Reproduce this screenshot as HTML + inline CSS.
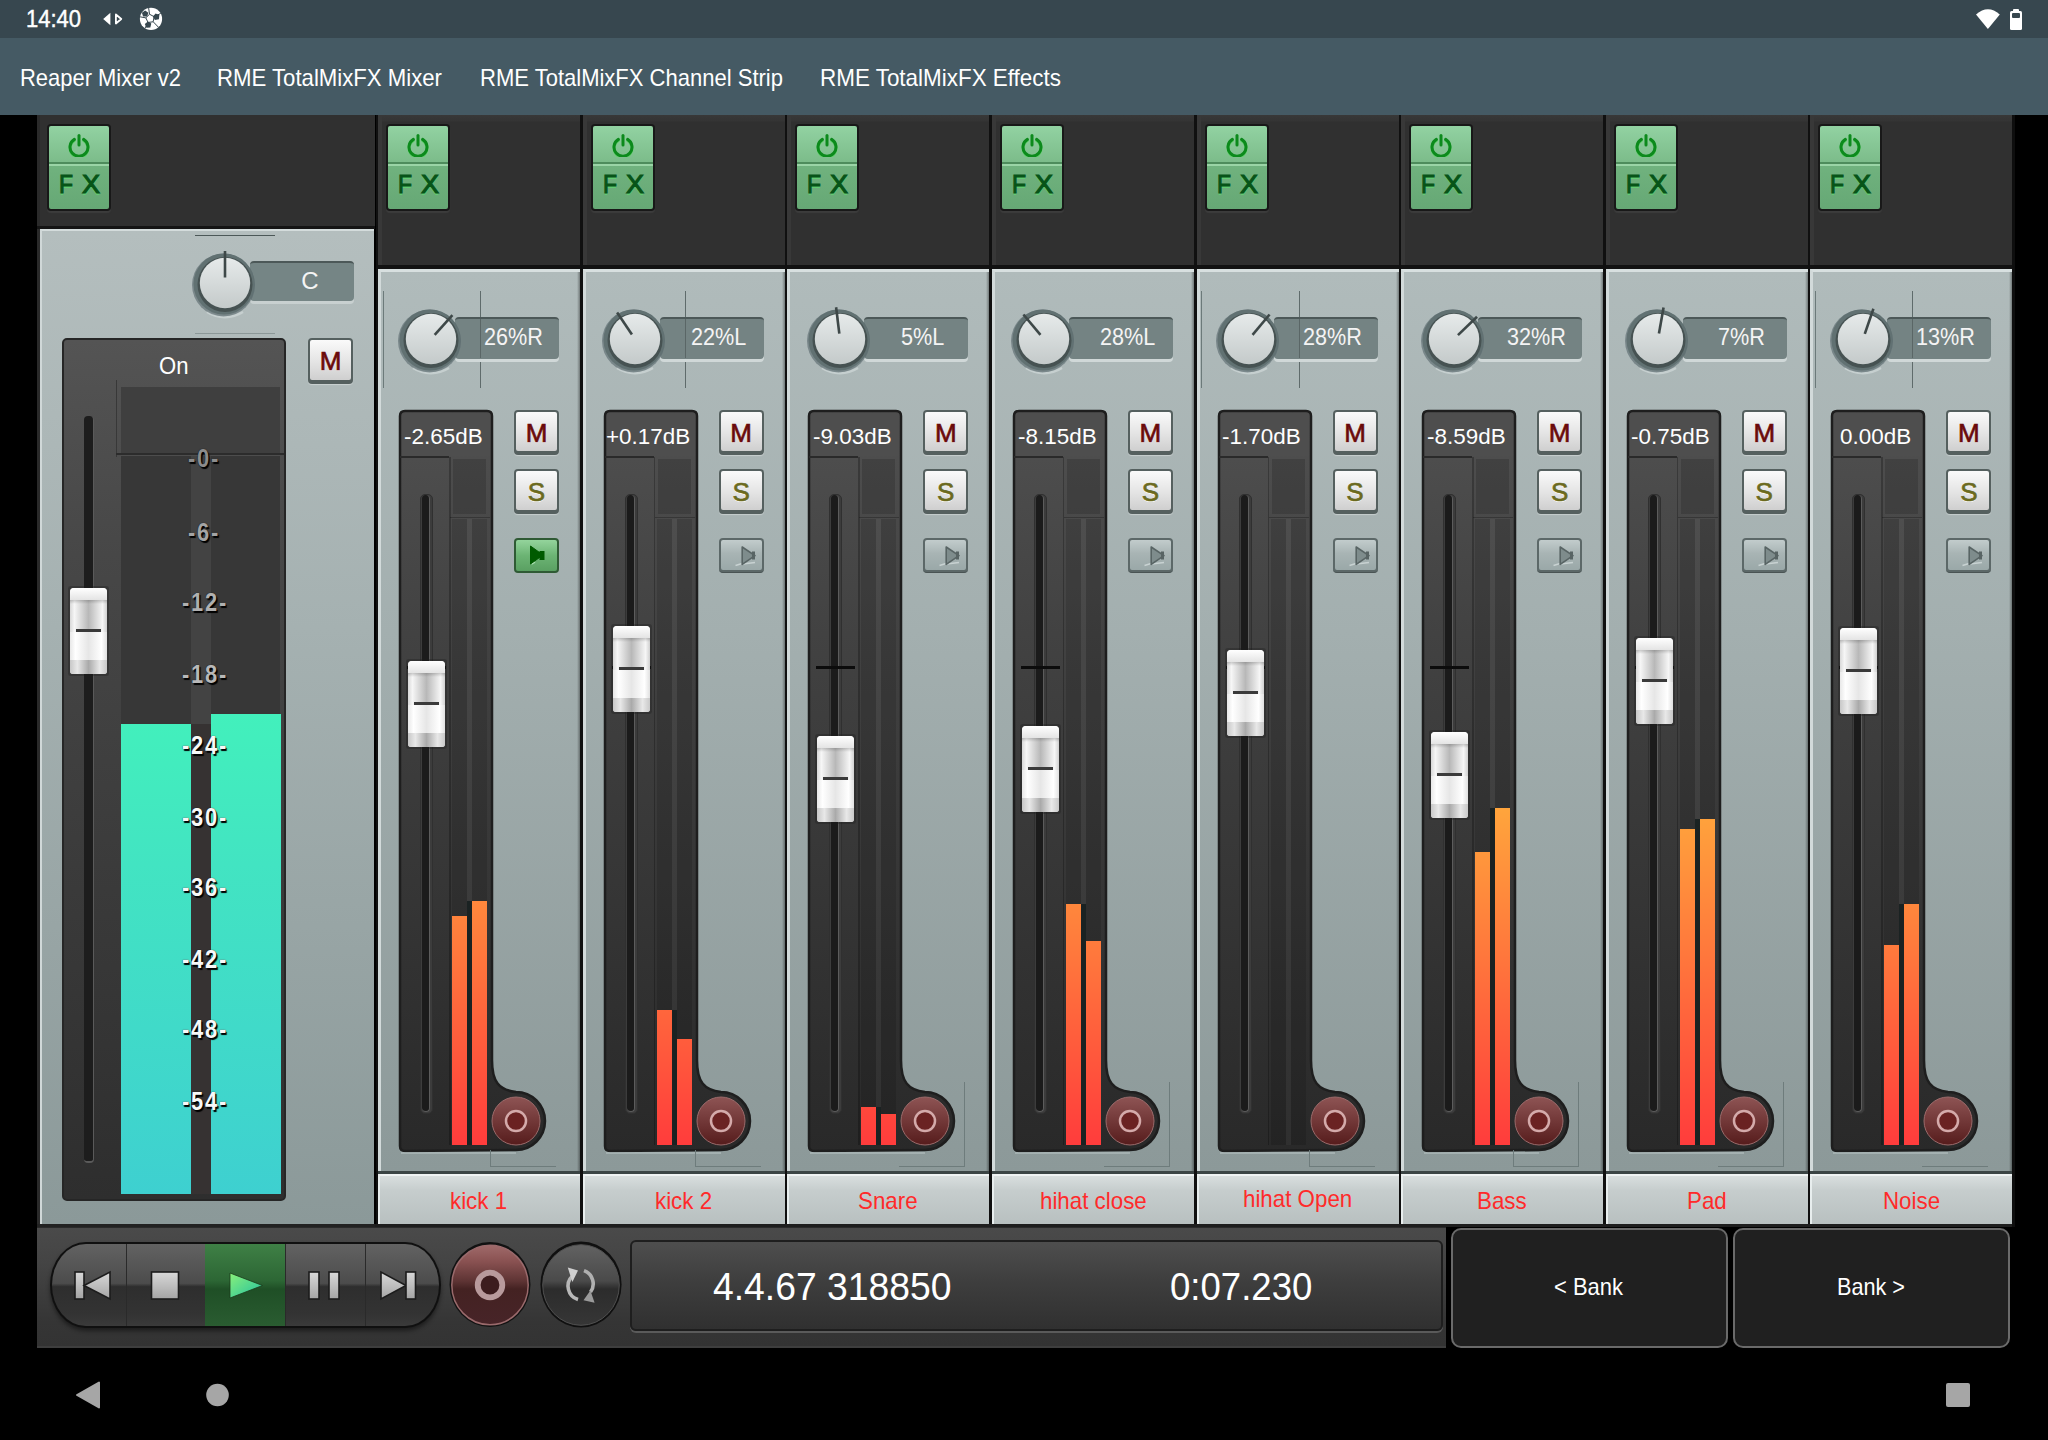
<!DOCTYPE html>
<html><head><meta charset="utf-8"><style>
html,body{margin:0;padding:0;background:#000;width:2048px;height:1440px;overflow:hidden;font-family:"Liberation Sans", sans-serif;}
div{box-sizing:border-box;}
</style></head><body>
<div style="position:relative;width:2048px;height:1440px;overflow:hidden;background:#000">
<div style="position:absolute;left:0px;top:0px;width:2048px;height:38px;background:#37474f"></div><div style="position:absolute;left:26.00px;top:8.45px;font-size:23px;line-height:23px;color:#fff;font-weight:400;white-space:nowrap;transform:scaleX(0.9556);transform-origin:0 0;-webkit-text-stroke:0.4px #fff">14:40</div><svg style="position:absolute;left:100px;top:10px" width="26" height="20" viewBox="100 10 26 20"><path d="M103.2 19 L110.4 12.7 L110.4 25.3 Z" fill="#fff"/><path d="M115.9 14.5 L121.3 19 L115.9 23.5 Z" fill="none" stroke="#fff" stroke-width="1.8" stroke-linejoin="round"/></svg><svg style="position:absolute;left:138px;top:6px" width="26" height="26" viewBox="-13 -12.9 26 26"><defs><clipPath id="bc"><circle r="11.1"/></clipPath></defs><circle r="11.1" fill="#fff"/><g clip-path="url(#bc)"><path d="M-5.87 -8.50 L-2.64 -6.15 L-3.87 -2.35 L-7.87 -2.35 L-9.10 -6.15 Z" fill="#37474f"/><path d="M8.36 -3.85 L7.93 0.24 L3.91 1.10 L1.85 -2.47 L4.60 -5.52 Z" fill="#37474f"/><path d="M-0.68 8.50 L-4.67 8.78 L-6.17 5.08 L-3.11 2.51 L0.28 4.63 Z" fill="#37474f"/><path d="M-5.20 -1.06 L-1.48 -4.66 L3.08 -2.23 L2.19 2.87 L-2.94 3.58 Z M-5.20 -1.06 L-13.08 -2.45 M-1.48 -4.66 L-2.60 -12.58 M3.08 -2.23 L10.28 -5.74 M2.19 2.87 L7.74 8.62 M-2.94 3.58 L-6.69 10.65 " stroke="#37474f" stroke-width="1" fill="none"/></g></svg><svg style="position:absolute;left:1970px;top:4px" width="36" height="30" viewBox="1970 4 36 30"><path d="M1976 14.45 Q1988 4 1999.8 14.45 L1987.9 28.9 Z" fill="#fff"/></svg><div style="position:absolute;left:2010px;top:10.5px;width:12.3px;height:19.4px;background:#fff;border-radius:1.5px"></div><div style="position:absolute;left:2013.3px;top:8.8px;width:5.3px;height:2.5px;background:#fff;border-radius:1px 1px 0 0"></div><div style="position:absolute;left:2012px;top:13.3px;width:8px;height:5.1px;background:#37474f;border-radius:1px"></div><div style="position:absolute;left:0px;top:38px;width:2048px;height:77px;background:#455a64"></div><div style="position:absolute;left:19.50px;top:65.60px;font-size:24px;line-height:24px;color:#fff;font-weight:400;white-space:nowrap;transform:scaleX(0.9144);transform-origin:0 0;">Reaper Mixer v2</div><div style="position:absolute;left:217.00px;top:65.60px;font-size:24px;line-height:24px;color:#fff;font-weight:400;white-space:nowrap;transform:scaleX(0.9237);transform-origin:0 0;">RME TotalMixFX Mixer</div><div style="position:absolute;left:480.00px;top:65.60px;font-size:24px;line-height:24px;color:#fff;font-weight:400;white-space:nowrap;transform:scaleX(0.9172);transform-origin:0 0;">RME TotalMixFX Channel Strip</div><div style="position:absolute;left:820.00px;top:65.60px;font-size:24px;line-height:24px;color:#fff;font-weight:400;white-space:nowrap;transform:scaleX(0.9346);transform-origin:0 0;">RME TotalMixFX Effects</div><div style="position:absolute;left:37px;top:115px;width:338px;height:114px;background:#303030;border-left:3px solid #2a2a2a"></div><div style="position:absolute;left:37px;top:115px;width:3px;height:1112px;background:#2a2a2a"></div><div style="position:absolute;left:37px;top:226px;width:338px;height:3px;background:#141414"></div><div style="position:absolute;left:47px;top:124px;width:64px;height:87px;background:#181818;border-radius:4px;box-shadow:0 2px 1px #3c3c3c"></div><div style="position:absolute;left:49px;top:126px;width:60px;height:36px;background:linear-gradient(#92d2a2,#7cbc8a);border-radius:2px 2px 0 0"></div><div style="position:absolute;left:49px;top:162px;width:60px;height:1.5px;background:#4e8c5c"></div><div style="position:absolute;left:49px;top:163.5px;width:60px;height:2px;background:#9ad4a6"></div><div style="position:absolute;left:49px;top:165.5px;width:60px;height:43px;background:linear-gradient(#70b27e,#66a875);border-radius:0 0 2px 2px"></div><svg style="position:absolute;left:67px;top:133px" width="24" height="24" viewBox="-12 -13 24 24"><path d="M-4.6 -6.6 A9 9 0 1 0 4.6 -6.6" fill="none" stroke="#5fd06a" stroke-width="3" stroke-linecap="round" transform="translate(0,1)"/><path d="M-4.6 -6.6 A9 9 0 1 0 4.6 -6.6" fill="none" stroke="#0c8a1c" stroke-width="3" stroke-linecap="round"/><path d="M0 -10.5 L0 -1" stroke="#0c8a1c" stroke-width="3" stroke-linecap="round"/></svg><div style="position:absolute;left:59.00px;top:170.90px;font-size:26px;line-height:26px;color:#075418;font-weight:400;white-space:nowrap;transform:scaleX(0.8815);transform-origin:0 0;-webkit-text-stroke:1.1px #075418;text-shadow:0 1.5px 0 #62cc72">F</div><div style="position:absolute;left:82.00px;top:170.90px;font-size:26px;line-height:26px;color:#075418;font-weight:400;white-space:nowrap;transform:scaleX(1.0380);transform-origin:0 0;-webkit-text-stroke:1.1px #075418;text-shadow:0 1.5px 0 #62cc72">X</div><div style="position:absolute;left:40px;top:229px;width:334px;height:995px;background:linear-gradient(to bottom,#b4bebe 0%,#a5b1b1 40%,#8b9999 100%);border-top:2px solid #d4dcdc;border-left:2px solid #d0d8d8"></div><div style="position:absolute;left:195px;top:235px;width:80px;height:1px;background:#4c5858"></div><div style="position:absolute;left:195px;top:333px;width:80px;height:1px;background:#8c9898"></div><div style="position:absolute;left:250px;top:261px;width:104px;height:40px;background:#758585;border-top:2px solid #4c5858;border-radius:4px;box-shadow:0 3px 0 #c8d0d0"></div><svg style="position:absolute;left:185px;top:243px;overflow:visible" width="80" height="80" viewBox="-40 -40 80 80"><defs><linearGradient id="kg" x1="0" y1="0" x2="0" y2="1"><stop offset="0" stop-color="#e6eaea"/><stop offset="1" stop-color="#c4caca"/></linearGradient></defs><path d="M-18 29 A34 34 0 0 0 18 29" fill="none" stroke="#d0d8d8" stroke-width="2.5" opacity="0.7"/><circle cx="-1.5" cy="2" r="31.5" fill="#56666a" opacity="0.6"/><circle cx="-1" cy="1" r="30.5" fill="#617172"/><circle cx="0" cy="1.5" r="27.5" fill="#465252"/><circle cx="0" cy="0" r="25.2" fill="url(#kg)"/><line x1="0.00" y1="-5.50" x2="0.00" y2="-32.00" stroke="#3e4848" stroke-width="2.6"/></svg><div style="position:absolute;left:301.33px;top:268.60px;font-size:24px;line-height:24px;color:#f4f4f4;font-weight:400;white-space:nowrap;transform:scaleX(1.0000);transform-origin:0 0;">C</div><div style="position:absolute;left:308px;top:338px;width:45px;height:46px;background:#55605f;border-radius:4px;box-shadow:0 1px 1px rgba(255,255,255,.35)"></div><div style="position:absolute;left:310px;top:340px;width:41px;height:40px;background:linear-gradient(#fafafa,#e4e4e4 55%,#cfcfcf);border-radius:2px"></div><div style="position:absolute;left:319.67px;top:348.40px;font-size:26px;line-height:26px;color:#6a0a0a;font-weight:400;white-space:nowrap;transform:scaleX(1.0000);transform-origin:0 0;-webkit-text-stroke:0.7px #6a0a0a;text-shadow:0 1px 0 #fff">M</div><div style="position:absolute;left:62px;top:338px;width:224px;height:863px;background:linear-gradient(to bottom,#545454 0%,#474747 25%,#2e2e2e 100%);border:2px solid #262626;border-radius:5px"></div><div style="position:absolute;left:159.27px;top:354.10px;font-size:24px;line-height:24px;color:#fff;font-weight:400;white-space:nowrap;transform:scaleX(0.9200);transform-origin:0 0;">On</div><div style="position:absolute;left:116px;top:380px;width:1px;height:77px;background:#383838"></div><div style="position:absolute;left:121px;top:387px;width:159px;height:66px;background:#3f3f3f"></div><div style="position:absolute;left:116px;top:453px;width:168px;height:2px;background:#2c2c2c"></div><div style="position:absolute;left:121px;top:456px;width:159px;height:738px;background:#373737"></div><div style="position:absolute;left:191px;top:456px;width:20px;height:738px;background:#434343"></div><div style="position:absolute;left:121px;top:724px;width:70px;height:470px;background:linear-gradient(to bottom,#42f0bc 0px,#42e4c2 150px,#3ed0d0 480px);background-size:100% 480px;background-position:0 -10px"></div><div style="position:absolute;left:211px;top:714px;width:70px;height:480px;background:linear-gradient(to bottom,#42f0bc 0px,#42e4c2 150px,#3ed0d0 480px);background-size:100% 480px"></div><div style="position:absolute;left:191px;top:724px;width:20px;height:470px;background:#363232"></div><div style="position:absolute;left:84px;top:416px;width:10px;height:747px;background:#1d1d1d;border-radius:4px;border-right:1.5px solid #5a5a5a;border-bottom:2px solid #5a5a5a"></div><div style="position:absolute;left:188.38px;top:444.90px;font-size:26px;line-height:26px;color:#8c8c8c;font-weight:700;letter-spacing:2.2px;white-space:nowrap;transform:scaleX(0.84);transform-origin:0 0;text-shadow:1.5px 1.5px 1px #000, 0 0 1px #000">-0-</div><div style="position:absolute;left:188.38px;top:518.90px;font-size:26px;line-height:26px;color:#a4a4a4;font-weight:700;letter-spacing:2.2px;white-space:nowrap;transform:scaleX(0.84);transform-origin:0 0;text-shadow:1.5px 1.5px 1px #000, 0 0 1px #000">-6-</div><div style="position:absolute;left:182.31px;top:588.90px;font-size:26px;line-height:26px;color:#b0b0b0;font-weight:700;letter-spacing:2.2px;white-space:nowrap;transform:scaleX(0.84);transform-origin:0 0;text-shadow:1.5px 1.5px 1px #000, 0 0 1px #000">-12-</div><div style="position:absolute;left:182.31px;top:660.90px;font-size:26px;line-height:26px;color:#b8b8b8;font-weight:700;letter-spacing:2.2px;white-space:nowrap;transform:scaleX(0.84);transform-origin:0 0;text-shadow:1.5px 1.5px 1px #000, 0 0 1px #000">-18-</div><div style="position:absolute;left:182.31px;top:731.90px;font-size:26px;line-height:26px;color:#f8f8f8;font-weight:700;letter-spacing:2.2px;white-space:nowrap;transform:scaleX(0.84);transform-origin:0 0;text-shadow:1.5px 1.5px 1px #000, 0 0 1px #000">-24-</div><div style="position:absolute;left:182.31px;top:803.90px;font-size:26px;line-height:26px;color:#f8f8f8;font-weight:700;letter-spacing:2.2px;white-space:nowrap;transform:scaleX(0.84);transform-origin:0 0;text-shadow:1.5px 1.5px 1px #000, 0 0 1px #000">-30-</div><div style="position:absolute;left:182.31px;top:873.90px;font-size:26px;line-height:26px;color:#f8f8f8;font-weight:700;letter-spacing:2.2px;white-space:nowrap;transform:scaleX(0.84);transform-origin:0 0;text-shadow:1.5px 1.5px 1px #000, 0 0 1px #000">-36-</div><div style="position:absolute;left:182.31px;top:945.90px;font-size:26px;line-height:26px;color:#f8f8f8;font-weight:700;letter-spacing:2.2px;white-space:nowrap;transform:scaleX(0.84);transform-origin:0 0;text-shadow:1.5px 1.5px 1px #000, 0 0 1px #000">-42-</div><div style="position:absolute;left:182.31px;top:1015.90px;font-size:26px;line-height:26px;color:#f8f8f8;font-weight:700;letter-spacing:2.2px;white-space:nowrap;transform:scaleX(0.84);transform-origin:0 0;text-shadow:1.5px 1.5px 1px #000, 0 0 1px #000">-48-</div><div style="position:absolute;left:182.31px;top:1087.90px;font-size:26px;line-height:26px;color:#f8f8f8;font-weight:700;letter-spacing:2.2px;white-space:nowrap;transform:scaleX(0.84);transform-origin:0 0;text-shadow:1.5px 1.5px 1px #000, 0 0 1px #000">-54-</div><div style="position:absolute;left:68px;top:586px;width:41px;height:90px;background:rgba(30,30,30,0.35);border-radius:3px"></div><div style="position:absolute;left:70px;top:588px;width:37px;height:86px;border-radius:4px 4px 3px 3px;background:linear-gradient(to right,#d8d8d8 0%,#f6f6f6 12%,#b8b8b8 50%,#f6f6f6 88%,#d0d0d0 100%)"></div><div style="position:absolute;left:70px;top:588px;width:37px;height:12px;border-radius:4px 4px 0 0;background:linear-gradient(#ffffff,#e4e4e4)"></div><div style="position:absolute;left:70px;top:600px;width:37px;height:4px;background:linear-gradient(rgba(0,0,0,.18),rgba(0,0,0,0))"></div><div style="position:absolute;left:70px;top:632px;width:37px;height:30px;background:linear-gradient(to right,#e8e8e8 0%,#ffffff 15%,#e6e6e6 50%,#ffffff 85%,#e0e0e0 100%)"></div><div style="position:absolute;left:76px;top:629px;width:25px;height:3px;background:#3a3a3a"></div><div style="position:absolute;left:70px;top:660px;width:37px;height:14px;border-radius:0 0 3px 3px;background:linear-gradient(to right,#c8c8c8,#e8e8e8 20%,#aaaaaa 50%,#e8e8e8 80%,#c8c8c8)"></div><div style="position:absolute;left:37px;top:1224px;width:338px;height:3px;background:#222"></div><div style="position:absolute;left:375.5px;top:115px;width:2.5px;height:1109px;background:#101010"></div><div style="position:absolute;left:378.0px;top:115px;width:202px;height:150px;background:linear-gradient(#383838 0px,#343434 6px,#303030 7px,#303030 100%);border-left:4px solid #383838"></div><div style="position:absolute;left:378.0px;top:265px;width:202px;height:4px;background:#121212"></div><div style="position:absolute;left:386.0px;top:124px;width:64px;height:87px;background:#181818;border-radius:4px;box-shadow:0 2px 1px #3c3c3c"></div><div style="position:absolute;left:388.0px;top:126px;width:60px;height:36px;background:linear-gradient(#92d2a2,#7cbc8a);border-radius:2px 2px 0 0"></div><div style="position:absolute;left:388.0px;top:162px;width:60px;height:1.5px;background:#4e8c5c"></div><div style="position:absolute;left:388.0px;top:163.5px;width:60px;height:2px;background:#9ad4a6"></div><div style="position:absolute;left:388.0px;top:165.5px;width:60px;height:43px;background:linear-gradient(#70b27e,#66a875);border-radius:0 0 2px 2px"></div><svg style="position:absolute;left:406.0px;top:133px" width="24" height="24" viewBox="-12 -13 24 24"><path d="M-4.6 -6.6 A9 9 0 1 0 4.6 -6.6" fill="none" stroke="#5fd06a" stroke-width="3" stroke-linecap="round" transform="translate(0,1)"/><path d="M-4.6 -6.6 A9 9 0 1 0 4.6 -6.6" fill="none" stroke="#0c8a1c" stroke-width="3" stroke-linecap="round"/><path d="M0 -10.5 L0 -1" stroke="#0c8a1c" stroke-width="3" stroke-linecap="round"/></svg><div style="position:absolute;left:398.00px;top:170.90px;font-size:26px;line-height:26px;color:#075418;font-weight:400;white-space:nowrap;transform:scaleX(0.8815);transform-origin:0 0;-webkit-text-stroke:1.1px #075418;text-shadow:0 1.5px 0 #62cc72">F</div><div style="position:absolute;left:421.00px;top:170.90px;font-size:26px;line-height:26px;color:#075418;font-weight:400;white-space:nowrap;transform:scaleX(1.0380);transform-origin:0 0;-webkit-text-stroke:1.1px #075418;text-shadow:0 1.5px 0 #62cc72">X</div><div style="position:absolute;left:378.0px;top:269px;width:202px;height:902px;background:linear-gradient(to bottom,#b0bbbb 0%,#a3afaf 40%,#8c9999 100%);border-top:3px solid #d8e0e0;border-left:3px solid #d2dada"></div><div style="position:absolute;left:577.0px;top:272px;width:3px;height:899px;background:linear-gradient(to right,rgba(0,0,0,0),rgba(0,0,0,0.35))"></div><div style="position:absolute;left:382.5px;top:291px;width:1px;height:97px;background:#6c7a7a"></div><div style="position:absolute;left:480.0px;top:291px;width:1px;height:97px;background:#5f6b6b"></div><div style="position:absolute;left:455.0px;top:316.5px;width:104px;height:42px;background:#748383;border-top:2px solid #4c5858;border-radius:4px;box-shadow:0 3px 0 #d0d8d8"></div><svg style="position:absolute;left:390.5px;top:298.5px;overflow:visible" width="80" height="80" viewBox="-40 -40 80 80"><defs><linearGradient id="kg" x1="0" y1="0" x2="0" y2="1"><stop offset="0" stop-color="#e6eaea"/><stop offset="1" stop-color="#c4caca"/></linearGradient></defs><path d="M-18 29 A34 34 0 0 0 18 29" fill="none" stroke="#d0d8d8" stroke-width="2.5" opacity="0.7"/><circle cx="-1.5" cy="2" r="31.5" fill="#56666a" opacity="0.6"/><circle cx="-1" cy="1" r="30.5" fill="#617172"/><circle cx="0" cy="1.5" r="27.5" fill="#465252"/><circle cx="0" cy="0" r="25.2" fill="url(#kg)"/><line x1="3.68" y1="-4.09" x2="21.41" y2="-23.78" stroke="#3e4848" stroke-width="2.6"/></svg><div style="position:absolute;left:480.0px;top:319px;width:1px;height:39px;background:#5a6666"></div><div style="position:absolute;left:484.08px;top:324.60px;font-size:24px;line-height:24px;color:#f4f4f4;font-weight:400;white-space:nowrap;transform:scaleX(0.9000);transform-origin:0 0;">26%R</div><svg style="position:absolute;left:375.0px;top:400px" width="190" height="780" viewBox="0 400 190 780"><defs><linearGradient id="fb" x1="0" y1="411" x2="0" y2="1151" gradientUnits="userSpaceOnUse"><stop offset="0" stop-color="#505050"/><stop offset="0.3" stop-color="#424242"/><stop offset="1" stop-color="#292929"/></linearGradient><linearGradient id="rb" x1="0" y1="0" x2="0" y2="1"><stop offset="0" stop-color="#8e5454"/><stop offset="1" stop-color="#561c1c"/></linearGradient></defs><path d="M30 411 L112 411 Q117 411 117 416 L117 1060 C117 1082 124 1090 141 1092 A29 29 0 0 1 141 1150 L30 1151 Q25 1151 25 1146 L25 416 Q25 411 30 411 Z" fill="url(#fb)" stroke="#1e1e1e" stroke-width="2.5"/><path d="M26 1153 L141 1153" stroke="#b4c0c0" stroke-width="1.5" opacity="0.8"/><circle cx="141" cy="1121" r="24" fill="url(#rb)" stroke="#9a6a6a" stroke-width="1"/><circle cx="141" cy="1121" r="10" fill="#6a2222" stroke="#d4aaaa" stroke-width="2.5"/><path d="M115.5 1150 L115.5 1166" stroke="#6e7c7c" stroke-width="1"/><path d="M115 1166.5 L181 1166.5" stroke="#6e7c7c" stroke-width="1"/></svg><div style="position:absolute;left:402.0px;top:413px;width:88px;height:43px;background:#4e4e4e;border-radius:3px 3px 0 0"></div><div style="position:absolute;left:403.70px;top:425.80px;font-size:22px;line-height:22px;color:#fff;font-weight:400;white-space:nowrap;transform:scaleX(1.0200);transform-origin:0 0;">-2.65dB</div><div style="position:absolute;left:400.0px;top:456px;width:49px;height:1.5px;background:#2a2a2a"></div><div style="position:absolute;left:449.0px;top:457px;width:1.5px;height:688px;background:rgba(0,0,0,0.25)"></div><div style="position:absolute;left:453.0px;top:459px;width:33px;height:55px;background:rgba(0,0,0,0.15)"></div><div style="position:absolute;left:450.0px;top:516.5px;width:40px;height:1.5px;background:rgba(0,0,0,0.25)"></div><div style="position:absolute;left:452.0px;top:519px;width:15px;height:626px;background:rgba(0,0,0,0.13)"></div><div style="position:absolute;left:472.0px;top:519px;width:15px;height:626px;background:rgba(0,0,0,0.13)"></div><div style="position:absolute;left:467.0px;top:519px;width:5px;height:626px;background:rgba(255,255,255,0.03)"></div><div style="position:absolute;left:452.0px;top:916px;width:15px;height:229px;background:linear-gradient(to bottom,#ffff3c 0px,#ff3c3c 627px);background-size:15px 627px;background-position:0 -398px"></div><div style="position:absolute;left:472.0px;top:901px;width:15px;height:244px;background:linear-gradient(to bottom,#ffff3c 0px,#ff3c3c 627px);background-size:15px 627px;background-position:0 -383px"></div><div style="position:absolute;left:467.0px;top:901px;width:5px;height:244px;background:#1a2222"></div><div style="position:absolute;left:420.0px;top:494px;width:13px;height:620px;border-radius:5px;background:#3c3c3c;border:1px solid #303030"></div><div style="position:absolute;left:422.0px;top:495px;width:8px;height:617px;border-radius:4px;background:#1b1b1b;border-right:1.5px solid #5c5c5c;border-bottom:1.5px solid #5c5c5c"></div><div style="position:absolute;left:407.0px;top:665.5px;width:39px;height:3px;background:#0c0c0c"></div><div style="position:absolute;left:406.0px;top:659px;width:41px;height:90px;background:rgba(30,30,30,0.35);border-radius:3px"></div><div style="position:absolute;left:408.0px;top:661px;width:37px;height:86px;border-radius:4px 4px 3px 3px;background:linear-gradient(to right,#d8d8d8 0%,#f6f6f6 12%,#b8b8b8 50%,#f6f6f6 88%,#d0d0d0 100%)"></div><div style="position:absolute;left:408.0px;top:661px;width:37px;height:12px;border-radius:4px 4px 0 0;background:linear-gradient(#ffffff,#e4e4e4)"></div><div style="position:absolute;left:408.0px;top:673px;width:37px;height:4px;background:linear-gradient(rgba(0,0,0,.18),rgba(0,0,0,0))"></div><div style="position:absolute;left:408.0px;top:705px;width:37px;height:30px;background:linear-gradient(to right,#e8e8e8 0%,#ffffff 15%,#e6e6e6 50%,#ffffff 85%,#e0e0e0 100%)"></div><div style="position:absolute;left:414.0px;top:702px;width:25px;height:3px;background:#3a3a3a"></div><div style="position:absolute;left:408.0px;top:733px;width:37px;height:14px;border-radius:0 0 3px 3px;background:linear-gradient(to right,#c8c8c8,#e8e8e8 20%,#aaaaaa 50%,#e8e8e8 80%,#c8c8c8)"></div><div style="position:absolute;left:514.0px;top:410px;width:45px;height:45px;background:#55605f;border-radius:4px;box-shadow:0 1px 1px rgba(255,255,255,.35)"></div><div style="position:absolute;left:516.0px;top:412px;width:41px;height:39px;background:linear-gradient(#fafafa,#e4e4e4 55%,#cfcfcf);border-radius:2px"></div><div style="position:absolute;left:525.67px;top:420.40px;font-size:26px;line-height:26px;color:#6a0a0a;font-weight:400;white-space:nowrap;transform:scaleX(1.0000);transform-origin:0 0;-webkit-text-stroke:0.7px #6a0a0a;text-shadow:0 1px 0 #fff">M</div><div style="position:absolute;left:514.0px;top:469px;width:45px;height:45px;background:#55605f;border-radius:4px;box-shadow:0 1px 1px rgba(255,255,255,.35)"></div><div style="position:absolute;left:516.0px;top:471px;width:41px;height:39px;background:linear-gradient(#fafafa,#e4e4e4 55%,#cfcfcf);border-radius:2px"></div><div style="position:absolute;left:527.83px;top:479.40px;font-size:26px;line-height:26px;color:#6b6a1e;font-weight:400;white-space:nowrap;transform:scaleX(1.0000);transform-origin:0 0;-webkit-text-stroke:0.7px #6b6a1e;text-shadow:0 1px 0 #fff">S</div><div style="position:absolute;left:514.0px;top:538px;width:45px;height:35px;background:#2f5a34;border-radius:4px"></div><div style="position:absolute;left:516.0px;top:540px;width:41px;height:31px;background:linear-gradient(#94d49c,#6cb474 50%,#5aa062);border-radius:2px"></div><svg style="position:absolute;left:514.0px;top:538px" width="45" height="35" viewBox="0 0 45 35"><path d="M17.5 26 L21 24" stroke="#a8e0b0" stroke-width="1.6"/><path d="M16.5 8 L16.5 26 L29 17 Z" fill="#005a00" stroke="#005a00" stroke-width="1" stroke-linejoin="round"/><rect x="25.5" y="13" width="5" height="9" fill="#005a00"/></svg><div style="position:absolute;left:378.0px;top:1171px;width:202px;height:3px;background:#3a4444"></div><div style="position:absolute;left:378.0px;top:1174px;width:202px;height:50px;background:linear-gradient(#d8dede,#c6cdcd 30%,#b8c0c0);border-top:2px solid #eef2f2;border-left:2px solid #e8eeee"></div><div style="position:absolute;left:450.47px;top:1188.60px;font-size:24px;line-height:24px;color:#ff2a2a;font-weight:400;white-space:nowrap;transform:scaleX(0.9300);transform-origin:0 0;">kick 1</div><div style="position:absolute;left:375.0px;top:1224px;width:205px;height:3px;background:#1e1e1e"></div><div style="position:absolute;left:580.12px;top:115px;width:2.5px;height:1109px;background:#101010"></div><div style="position:absolute;left:582.62px;top:115px;width:202px;height:150px;background:linear-gradient(#383838 0px,#343434 6px,#303030 7px,#303030 100%);border-left:4px solid #383838"></div><div style="position:absolute;left:582.62px;top:265px;width:202px;height:4px;background:#121212"></div><div style="position:absolute;left:590.62px;top:124px;width:64px;height:87px;background:#181818;border-radius:4px;box-shadow:0 2px 1px #3c3c3c"></div><div style="position:absolute;left:592.62px;top:126px;width:60px;height:36px;background:linear-gradient(#92d2a2,#7cbc8a);border-radius:2px 2px 0 0"></div><div style="position:absolute;left:592.62px;top:162px;width:60px;height:1.5px;background:#4e8c5c"></div><div style="position:absolute;left:592.62px;top:163.5px;width:60px;height:2px;background:#9ad4a6"></div><div style="position:absolute;left:592.62px;top:165.5px;width:60px;height:43px;background:linear-gradient(#70b27e,#66a875);border-radius:0 0 2px 2px"></div><svg style="position:absolute;left:610.62px;top:133px" width="24" height="24" viewBox="-12 -13 24 24"><path d="M-4.6 -6.6 A9 9 0 1 0 4.6 -6.6" fill="none" stroke="#5fd06a" stroke-width="3" stroke-linecap="round" transform="translate(0,1)"/><path d="M-4.6 -6.6 A9 9 0 1 0 4.6 -6.6" fill="none" stroke="#0c8a1c" stroke-width="3" stroke-linecap="round"/><path d="M0 -10.5 L0 -1" stroke="#0c8a1c" stroke-width="3" stroke-linecap="round"/></svg><div style="position:absolute;left:602.62px;top:170.90px;font-size:26px;line-height:26px;color:#075418;font-weight:400;white-space:nowrap;transform:scaleX(0.8815);transform-origin:0 0;-webkit-text-stroke:1.1px #075418;text-shadow:0 1.5px 0 #62cc72">F</div><div style="position:absolute;left:625.62px;top:170.90px;font-size:26px;line-height:26px;color:#075418;font-weight:400;white-space:nowrap;transform:scaleX(1.0380);transform-origin:0 0;-webkit-text-stroke:1.1px #075418;text-shadow:0 1.5px 0 #62cc72">X</div><div style="position:absolute;left:582.62px;top:269px;width:202px;height:902px;background:linear-gradient(to bottom,#b0bbbb 0%,#a3afaf 40%,#8c9999 100%);border-top:3px solid #d8e0e0;border-left:3px solid #d2dada"></div><div style="position:absolute;left:781.62px;top:272px;width:3px;height:899px;background:linear-gradient(to right,rgba(0,0,0,0),rgba(0,0,0,0.35))"></div><div style="position:absolute;left:684.62px;top:291px;width:1px;height:97px;background:#5f6b6b"></div><div style="position:absolute;left:659.62px;top:316.5px;width:104px;height:42px;background:#748383;border-top:2px solid #4c5858;border-radius:4px;box-shadow:0 3px 0 #d0d8d8"></div><svg style="position:absolute;left:595.12px;top:298.5px;overflow:visible" width="80" height="80" viewBox="-40 -40 80 80"><defs><linearGradient id="kg" x1="0" y1="0" x2="0" y2="1"><stop offset="0" stop-color="#e6eaea"/><stop offset="1" stop-color="#c4caca"/></linearGradient></defs><path d="M-18 29 A34 34 0 0 0 18 29" fill="none" stroke="#d0d8d8" stroke-width="2.5" opacity="0.7"/><circle cx="-1.5" cy="2" r="31.5" fill="#56666a" opacity="0.6"/><circle cx="-1" cy="1" r="30.5" fill="#617172"/><circle cx="0" cy="1.5" r="27.5" fill="#465252"/><circle cx="0" cy="0" r="25.2" fill="url(#kg)"/><line x1="-3.08" y1="-4.56" x2="-17.89" y2="-26.53" stroke="#3e4848" stroke-width="2.6"/></svg><div style="position:absolute;left:684.62px;top:319px;width:1px;height:39px;background:#5a6666"></div><div style="position:absolute;left:690.50px;top:324.60px;font-size:24px;line-height:24px;color:#f4f4f4;font-weight:400;white-space:nowrap;transform:scaleX(0.9000);transform-origin:0 0;">22%L</div><svg style="position:absolute;left:579.62px;top:400px" width="190" height="780" viewBox="0 400 190 780"><defs><linearGradient id="fb" x1="0" y1="411" x2="0" y2="1151" gradientUnits="userSpaceOnUse"><stop offset="0" stop-color="#505050"/><stop offset="0.3" stop-color="#424242"/><stop offset="1" stop-color="#292929"/></linearGradient><linearGradient id="rb" x1="0" y1="0" x2="0" y2="1"><stop offset="0" stop-color="#8e5454"/><stop offset="1" stop-color="#561c1c"/></linearGradient></defs><path d="M30 411 L112 411 Q117 411 117 416 L117 1060 C117 1082 124 1090 141 1092 A29 29 0 0 1 141 1150 L30 1151 Q25 1151 25 1146 L25 416 Q25 411 30 411 Z" fill="url(#fb)" stroke="#1e1e1e" stroke-width="2.5"/><path d="M26 1153 L141 1153" stroke="#b4c0c0" stroke-width="1.5" opacity="0.8"/><circle cx="141" cy="1121" r="24" fill="url(#rb)" stroke="#9a6a6a" stroke-width="1"/><circle cx="141" cy="1121" r="10" fill="#6a2222" stroke="#d4aaaa" stroke-width="2.5"/><path d="M115.5 1150 L115.5 1166" stroke="#6e7c7c" stroke-width="1"/><path d="M115 1166.5 L181 1166.5" stroke="#6e7c7c" stroke-width="1"/></svg><div style="position:absolute;left:606.62px;top:413px;width:88px;height:43px;background:#4e4e4e;border-radius:3px 3px 0 0"></div><div style="position:absolute;left:605.51px;top:425.80px;font-size:22px;line-height:22px;color:#fff;font-weight:400;white-space:nowrap;transform:scaleX(1.0200);transform-origin:0 0;">+0.17dB</div><div style="position:absolute;left:604.62px;top:456px;width:49px;height:1.5px;background:#2a2a2a"></div><div style="position:absolute;left:653.62px;top:457px;width:1.5px;height:688px;background:rgba(0,0,0,0.25)"></div><div style="position:absolute;left:657.62px;top:459px;width:33px;height:55px;background:rgba(0,0,0,0.15)"></div><div style="position:absolute;left:654.62px;top:516.5px;width:40px;height:1.5px;background:rgba(0,0,0,0.25)"></div><div style="position:absolute;left:656.62px;top:519px;width:15px;height:626px;background:rgba(0,0,0,0.13)"></div><div style="position:absolute;left:676.62px;top:519px;width:15px;height:626px;background:rgba(0,0,0,0.13)"></div><div style="position:absolute;left:671.62px;top:519px;width:5px;height:626px;background:rgba(255,255,255,0.03)"></div><div style="position:absolute;left:656.62px;top:1010px;width:15px;height:135px;background:linear-gradient(to bottom,#ffff3c 0px,#ff3c3c 627px);background-size:15px 627px;background-position:0 -492px"></div><div style="position:absolute;left:676.62px;top:1039px;width:15px;height:106px;background:linear-gradient(to bottom,#ffff3c 0px,#ff3c3c 627px);background-size:15px 627px;background-position:0 -521px"></div><div style="position:absolute;left:671.62px;top:1010px;width:5px;height:135px;background:#1a2222"></div><div style="position:absolute;left:624.62px;top:494px;width:13px;height:620px;border-radius:5px;background:#3c3c3c;border:1px solid #303030"></div><div style="position:absolute;left:626.62px;top:495px;width:8px;height:617px;border-radius:4px;background:#1b1b1b;border-right:1.5px solid #5c5c5c;border-bottom:1.5px solid #5c5c5c"></div><div style="position:absolute;left:611.62px;top:665.5px;width:39px;height:3px;background:#0c0c0c"></div><div style="position:absolute;left:610.62px;top:624px;width:41px;height:90px;background:rgba(30,30,30,0.35);border-radius:3px"></div><div style="position:absolute;left:612.62px;top:626px;width:37px;height:86px;border-radius:4px 4px 3px 3px;background:linear-gradient(to right,#d8d8d8 0%,#f6f6f6 12%,#b8b8b8 50%,#f6f6f6 88%,#d0d0d0 100%)"></div><div style="position:absolute;left:612.62px;top:626px;width:37px;height:12px;border-radius:4px 4px 0 0;background:linear-gradient(#ffffff,#e4e4e4)"></div><div style="position:absolute;left:612.62px;top:638px;width:37px;height:4px;background:linear-gradient(rgba(0,0,0,.18),rgba(0,0,0,0))"></div><div style="position:absolute;left:612.62px;top:670px;width:37px;height:30px;background:linear-gradient(to right,#e8e8e8 0%,#ffffff 15%,#e6e6e6 50%,#ffffff 85%,#e0e0e0 100%)"></div><div style="position:absolute;left:618.62px;top:667px;width:25px;height:3px;background:#3a3a3a"></div><div style="position:absolute;left:612.62px;top:698px;width:37px;height:14px;border-radius:0 0 3px 3px;background:linear-gradient(to right,#c8c8c8,#e8e8e8 20%,#aaaaaa 50%,#e8e8e8 80%,#c8c8c8)"></div><div style="position:absolute;left:718.62px;top:410px;width:45px;height:45px;background:#55605f;border-radius:4px;box-shadow:0 1px 1px rgba(255,255,255,.35)"></div><div style="position:absolute;left:720.62px;top:412px;width:41px;height:39px;background:linear-gradient(#fafafa,#e4e4e4 55%,#cfcfcf);border-radius:2px"></div><div style="position:absolute;left:730.29px;top:420.40px;font-size:26px;line-height:26px;color:#6a0a0a;font-weight:400;white-space:nowrap;transform:scaleX(1.0000);transform-origin:0 0;-webkit-text-stroke:0.7px #6a0a0a;text-shadow:0 1px 0 #fff">M</div><div style="position:absolute;left:718.62px;top:469px;width:45px;height:45px;background:#55605f;border-radius:4px;box-shadow:0 1px 1px rgba(255,255,255,.35)"></div><div style="position:absolute;left:720.62px;top:471px;width:41px;height:39px;background:linear-gradient(#fafafa,#e4e4e4 55%,#cfcfcf);border-radius:2px"></div><div style="position:absolute;left:732.45px;top:479.40px;font-size:26px;line-height:26px;color:#6b6a1e;font-weight:400;white-space:nowrap;transform:scaleX(1.0000);transform-origin:0 0;-webkit-text-stroke:0.7px #6b6a1e;text-shadow:0 1px 0 #fff">S</div><div style="position:absolute;left:718.62px;top:538px;width:45px;height:35px;background:#5c6868;border-radius:4px;border-bottom:1px solid #4a5454"></div><div style="position:absolute;left:720.62px;top:540px;width:41px;height:30px;background:linear-gradient(#c2cccc,#a8b4b4 45%,#9aa8a8);border-radius:2px"></div><svg style="position:absolute;left:718.62px;top:538px" width="45" height="35" viewBox="0 0 45 35"><path d="M23.5 26 L36 24.5 M16.5 27.5 L23 25.5" stroke="#c8d2d2" stroke-width="1.6"/><path d="M23.2 9 L23.2 26.4 L36 17.7 Z" fill="#7e8c8c" stroke="#586464" stroke-width="1.6" stroke-linejoin="round"/><rect x="33" y="13.5" width="3" height="8" fill="#586464"/></svg><div style="position:absolute;left:582.62px;top:1171px;width:202px;height:3px;background:#3a4444"></div><div style="position:absolute;left:582.62px;top:1174px;width:202px;height:50px;background:linear-gradient(#d8dede,#c6cdcd 30%,#b8c0c0);border-top:2px solid #eef2f2;border-left:2px solid #e8eeee"></div><div style="position:absolute;left:655.09px;top:1188.60px;font-size:24px;line-height:24px;color:#ff2a2a;font-weight:400;white-space:nowrap;transform:scaleX(0.9300);transform-origin:0 0;">kick 2</div><div style="position:absolute;left:579.62px;top:1224px;width:205px;height:3px;background:#1e1e1e"></div><div style="position:absolute;left:784.75px;top:115px;width:2.5px;height:1109px;background:#101010"></div><div style="position:absolute;left:787.25px;top:115px;width:202px;height:150px;background:linear-gradient(#383838 0px,#343434 6px,#303030 7px,#303030 100%);border-left:4px solid #383838"></div><div style="position:absolute;left:787.25px;top:265px;width:202px;height:4px;background:#121212"></div><div style="position:absolute;left:795.25px;top:124px;width:64px;height:87px;background:#181818;border-radius:4px;box-shadow:0 2px 1px #3c3c3c"></div><div style="position:absolute;left:797.25px;top:126px;width:60px;height:36px;background:linear-gradient(#92d2a2,#7cbc8a);border-radius:2px 2px 0 0"></div><div style="position:absolute;left:797.25px;top:162px;width:60px;height:1.5px;background:#4e8c5c"></div><div style="position:absolute;left:797.25px;top:163.5px;width:60px;height:2px;background:#9ad4a6"></div><div style="position:absolute;left:797.25px;top:165.5px;width:60px;height:43px;background:linear-gradient(#70b27e,#66a875);border-radius:0 0 2px 2px"></div><svg style="position:absolute;left:815.25px;top:133px" width="24" height="24" viewBox="-12 -13 24 24"><path d="M-4.6 -6.6 A9 9 0 1 0 4.6 -6.6" fill="none" stroke="#5fd06a" stroke-width="3" stroke-linecap="round" transform="translate(0,1)"/><path d="M-4.6 -6.6 A9 9 0 1 0 4.6 -6.6" fill="none" stroke="#0c8a1c" stroke-width="3" stroke-linecap="round"/><path d="M0 -10.5 L0 -1" stroke="#0c8a1c" stroke-width="3" stroke-linecap="round"/></svg><div style="position:absolute;left:807.25px;top:170.90px;font-size:26px;line-height:26px;color:#075418;font-weight:400;white-space:nowrap;transform:scaleX(0.8815);transform-origin:0 0;-webkit-text-stroke:1.1px #075418;text-shadow:0 1.5px 0 #62cc72">F</div><div style="position:absolute;left:830.25px;top:170.90px;font-size:26px;line-height:26px;color:#075418;font-weight:400;white-space:nowrap;transform:scaleX(1.0380);transform-origin:0 0;-webkit-text-stroke:1.1px #075418;text-shadow:0 1.5px 0 #62cc72">X</div><div style="position:absolute;left:787.25px;top:269px;width:202px;height:902px;background:linear-gradient(to bottom,#b0bbbb 0%,#a3afaf 40%,#8c9999 100%);border-top:3px solid #d8e0e0;border-left:3px solid #d2dada"></div><div style="position:absolute;left:986.25px;top:272px;width:3px;height:899px;background:linear-gradient(to right,rgba(0,0,0,0),rgba(0,0,0,0.35))"></div><div style="position:absolute;left:864.25px;top:316.5px;width:104px;height:42px;background:#748383;border-top:2px solid #4c5858;border-radius:4px;box-shadow:0 3px 0 #d0d8d8"></div><svg style="position:absolute;left:799.75px;top:298.5px;overflow:visible" width="80" height="80" viewBox="-40 -40 80 80"><defs><linearGradient id="kg" x1="0" y1="0" x2="0" y2="1"><stop offset="0" stop-color="#e6eaea"/><stop offset="1" stop-color="#c4caca"/></linearGradient></defs><path d="M-18 29 A34 34 0 0 0 18 29" fill="none" stroke="#d0d8d8" stroke-width="2.5" opacity="0.7"/><circle cx="-1.5" cy="2" r="31.5" fill="#56666a" opacity="0.6"/><circle cx="-1" cy="1" r="30.5" fill="#617172"/><circle cx="0" cy="1.5" r="27.5" fill="#465252"/><circle cx="0" cy="0" r="25.2" fill="url(#kg)"/><line x1="-0.67" y1="-5.46" x2="-3.90" y2="-31.76" stroke="#3e4848" stroke-width="2.6"/></svg><div style="position:absolute;left:901.13px;top:324.60px;font-size:24px;line-height:24px;color:#f4f4f4;font-weight:400;white-space:nowrap;transform:scaleX(0.9000);transform-origin:0 0;">5%L</div><svg style="position:absolute;left:784.25px;top:400px" width="190" height="780" viewBox="0 400 190 780"><defs><linearGradient id="fb" x1="0" y1="411" x2="0" y2="1151" gradientUnits="userSpaceOnUse"><stop offset="0" stop-color="#505050"/><stop offset="0.3" stop-color="#424242"/><stop offset="1" stop-color="#292929"/></linearGradient><linearGradient id="rb" x1="0" y1="0" x2="0" y2="1"><stop offset="0" stop-color="#8e5454"/><stop offset="1" stop-color="#561c1c"/></linearGradient></defs><path d="M30 411 L112 411 Q117 411 117 416 L117 1060 C117 1082 124 1090 141 1092 A29 29 0 0 1 141 1150 L30 1151 Q25 1151 25 1146 L25 416 Q25 411 30 411 Z" fill="url(#fb)" stroke="#1e1e1e" stroke-width="2.5"/><path d="M26 1153 L141 1153" stroke="#b4c0c0" stroke-width="1.5" opacity="0.8"/><circle cx="141" cy="1121" r="24" fill="url(#rb)" stroke="#9a6a6a" stroke-width="1"/><circle cx="141" cy="1121" r="10" fill="#6a2222" stroke="#d4aaaa" stroke-width="2.5"/><path d="M115 1166.5 L181 1166.5" stroke="#6e7c7c" stroke-width="1"/><path d="M180.5 1082 L180.5 1166" stroke="#6e7c7c" stroke-width="1"/></svg><div style="position:absolute;left:811.25px;top:413px;width:88px;height:43px;background:#4e4e4e;border-radius:3px 3px 0 0"></div><div style="position:absolute;left:812.95px;top:425.80px;font-size:22px;line-height:22px;color:#fff;font-weight:400;white-space:nowrap;transform:scaleX(1.0200);transform-origin:0 0;">-9.03dB</div><div style="position:absolute;left:809.25px;top:456px;width:49px;height:1.5px;background:#2a2a2a"></div><div style="position:absolute;left:858.25px;top:457px;width:1.5px;height:688px;background:rgba(0,0,0,0.25)"></div><div style="position:absolute;left:862.25px;top:459px;width:33px;height:55px;background:rgba(0,0,0,0.15)"></div><div style="position:absolute;left:859.25px;top:516.5px;width:40px;height:1.5px;background:rgba(0,0,0,0.25)"></div><div style="position:absolute;left:861.25px;top:519px;width:15px;height:626px;background:rgba(0,0,0,0.13)"></div><div style="position:absolute;left:881.25px;top:519px;width:15px;height:626px;background:rgba(0,0,0,0.13)"></div><div style="position:absolute;left:876.25px;top:519px;width:5px;height:626px;background:rgba(255,255,255,0.03)"></div><div style="position:absolute;left:861.25px;top:1107px;width:15px;height:38px;background:linear-gradient(to bottom,#ffff3c 0px,#ff3c3c 627px);background-size:15px 627px;background-position:0 -589px"></div><div style="position:absolute;left:881.25px;top:1114px;width:15px;height:31px;background:linear-gradient(to bottom,#ffff3c 0px,#ff3c3c 627px);background-size:15px 627px;background-position:0 -596px"></div><div style="position:absolute;left:876.25px;top:1107px;width:5px;height:38px;background:#1a2222"></div><div style="position:absolute;left:829.25px;top:494px;width:13px;height:620px;border-radius:5px;background:#3c3c3c;border:1px solid #303030"></div><div style="position:absolute;left:831.25px;top:495px;width:8px;height:617px;border-radius:4px;background:#1b1b1b;border-right:1.5px solid #5c5c5c;border-bottom:1.5px solid #5c5c5c"></div><div style="position:absolute;left:816.25px;top:665.5px;width:39px;height:3px;background:#0c0c0c"></div><div style="position:absolute;left:815.25px;top:734px;width:41px;height:90px;background:rgba(30,30,30,0.35);border-radius:3px"></div><div style="position:absolute;left:817.25px;top:736px;width:37px;height:86px;border-radius:4px 4px 3px 3px;background:linear-gradient(to right,#d8d8d8 0%,#f6f6f6 12%,#b8b8b8 50%,#f6f6f6 88%,#d0d0d0 100%)"></div><div style="position:absolute;left:817.25px;top:736px;width:37px;height:12px;border-radius:4px 4px 0 0;background:linear-gradient(#ffffff,#e4e4e4)"></div><div style="position:absolute;left:817.25px;top:748px;width:37px;height:4px;background:linear-gradient(rgba(0,0,0,.18),rgba(0,0,0,0))"></div><div style="position:absolute;left:817.25px;top:780px;width:37px;height:30px;background:linear-gradient(to right,#e8e8e8 0%,#ffffff 15%,#e6e6e6 50%,#ffffff 85%,#e0e0e0 100%)"></div><div style="position:absolute;left:823.25px;top:777px;width:25px;height:3px;background:#3a3a3a"></div><div style="position:absolute;left:817.25px;top:808px;width:37px;height:14px;border-radius:0 0 3px 3px;background:linear-gradient(to right,#c8c8c8,#e8e8e8 20%,#aaaaaa 50%,#e8e8e8 80%,#c8c8c8)"></div><div style="position:absolute;left:923.25px;top:410px;width:45px;height:45px;background:#55605f;border-radius:4px;box-shadow:0 1px 1px rgba(255,255,255,.35)"></div><div style="position:absolute;left:925.25px;top:412px;width:41px;height:39px;background:linear-gradient(#fafafa,#e4e4e4 55%,#cfcfcf);border-radius:2px"></div><div style="position:absolute;left:934.92px;top:420.40px;font-size:26px;line-height:26px;color:#6a0a0a;font-weight:400;white-space:nowrap;transform:scaleX(1.0000);transform-origin:0 0;-webkit-text-stroke:0.7px #6a0a0a;text-shadow:0 1px 0 #fff">M</div><div style="position:absolute;left:923.25px;top:469px;width:45px;height:45px;background:#55605f;border-radius:4px;box-shadow:0 1px 1px rgba(255,255,255,.35)"></div><div style="position:absolute;left:925.25px;top:471px;width:41px;height:39px;background:linear-gradient(#fafafa,#e4e4e4 55%,#cfcfcf);border-radius:2px"></div><div style="position:absolute;left:937.08px;top:479.40px;font-size:26px;line-height:26px;color:#6b6a1e;font-weight:400;white-space:nowrap;transform:scaleX(1.0000);transform-origin:0 0;-webkit-text-stroke:0.7px #6b6a1e;text-shadow:0 1px 0 #fff">S</div><div style="position:absolute;left:923.25px;top:538px;width:45px;height:35px;background:#5c6868;border-radius:4px;border-bottom:1px solid #4a5454"></div><div style="position:absolute;left:925.25px;top:540px;width:41px;height:30px;background:linear-gradient(#c2cccc,#a8b4b4 45%,#9aa8a8);border-radius:2px"></div><svg style="position:absolute;left:923.25px;top:538px" width="45" height="35" viewBox="0 0 45 35"><path d="M23.5 26 L36 24.5 M16.5 27.5 L23 25.5" stroke="#c8d2d2" stroke-width="1.6"/><path d="M23.2 9 L23.2 26.4 L36 17.7 Z" fill="#7e8c8c" stroke="#586464" stroke-width="1.6" stroke-linejoin="round"/><rect x="33" y="13.5" width="3" height="8" fill="#586464"/></svg><div style="position:absolute;left:787.25px;top:1171px;width:202px;height:3px;background:#3a4444"></div><div style="position:absolute;left:787.25px;top:1174px;width:202px;height:50px;background:linear-gradient(#d8dede,#c6cdcd 30%,#b8c0c0);border-top:2px solid #eef2f2;border-left:2px solid #e8eeee"></div><div style="position:absolute;left:858.47px;top:1188.60px;font-size:24px;line-height:24px;color:#ff2a2a;font-weight:400;white-space:nowrap;transform:scaleX(0.9300);transform-origin:0 0;">Snare</div><div style="position:absolute;left:784.25px;top:1224px;width:205px;height:3px;background:#1e1e1e"></div><div style="position:absolute;left:989.38px;top:115px;width:2.5px;height:1109px;background:#101010"></div><div style="position:absolute;left:991.88px;top:115px;width:202px;height:150px;background:linear-gradient(#383838 0px,#343434 6px,#303030 7px,#303030 100%);border-left:4px solid #383838"></div><div style="position:absolute;left:991.88px;top:265px;width:202px;height:4px;background:#121212"></div><div style="position:absolute;left:999.88px;top:124px;width:64px;height:87px;background:#181818;border-radius:4px;box-shadow:0 2px 1px #3c3c3c"></div><div style="position:absolute;left:1001.88px;top:126px;width:60px;height:36px;background:linear-gradient(#92d2a2,#7cbc8a);border-radius:2px 2px 0 0"></div><div style="position:absolute;left:1001.88px;top:162px;width:60px;height:1.5px;background:#4e8c5c"></div><div style="position:absolute;left:1001.88px;top:163.5px;width:60px;height:2px;background:#9ad4a6"></div><div style="position:absolute;left:1001.88px;top:165.5px;width:60px;height:43px;background:linear-gradient(#70b27e,#66a875);border-radius:0 0 2px 2px"></div><svg style="position:absolute;left:1019.8800000000001px;top:133px" width="24" height="24" viewBox="-12 -13 24 24"><path d="M-4.6 -6.6 A9 9 0 1 0 4.6 -6.6" fill="none" stroke="#5fd06a" stroke-width="3" stroke-linecap="round" transform="translate(0,1)"/><path d="M-4.6 -6.6 A9 9 0 1 0 4.6 -6.6" fill="none" stroke="#0c8a1c" stroke-width="3" stroke-linecap="round"/><path d="M0 -10.5 L0 -1" stroke="#0c8a1c" stroke-width="3" stroke-linecap="round"/></svg><div style="position:absolute;left:1011.88px;top:170.90px;font-size:26px;line-height:26px;color:#075418;font-weight:400;white-space:nowrap;transform:scaleX(0.8815);transform-origin:0 0;-webkit-text-stroke:1.1px #075418;text-shadow:0 1.5px 0 #62cc72">F</div><div style="position:absolute;left:1034.88px;top:170.90px;font-size:26px;line-height:26px;color:#075418;font-weight:400;white-space:nowrap;transform:scaleX(1.0380);transform-origin:0 0;-webkit-text-stroke:1.1px #075418;text-shadow:0 1.5px 0 #62cc72">X</div><div style="position:absolute;left:991.88px;top:269px;width:202px;height:902px;background:linear-gradient(to bottom,#b0bbbb 0%,#a3afaf 40%,#8c9999 100%);border-top:3px solid #d8e0e0;border-left:3px solid #d2dada"></div><div style="position:absolute;left:1190.88px;top:272px;width:3px;height:899px;background:linear-gradient(to right,rgba(0,0,0,0),rgba(0,0,0,0.35))"></div><div style="position:absolute;left:1068.88px;top:316.5px;width:104px;height:42px;background:#748383;border-top:2px solid #4c5858;border-radius:4px;box-shadow:0 3px 0 #d0d8d8"></div><svg style="position:absolute;left:1004.3800000000001px;top:298.5px;overflow:visible" width="80" height="80" viewBox="-40 -40 80 80"><defs><linearGradient id="kg" x1="0" y1="0" x2="0" y2="1"><stop offset="0" stop-color="#e6eaea"/><stop offset="1" stop-color="#c4caca"/></linearGradient></defs><path d="M-18 29 A34 34 0 0 0 18 29" fill="none" stroke="#d0d8d8" stroke-width="2.5" opacity="0.7"/><circle cx="-1.5" cy="2" r="31.5" fill="#56666a" opacity="0.6"/><circle cx="-1" cy="1" r="30.5" fill="#617172"/><circle cx="0" cy="1.5" r="27.5" fill="#465252"/><circle cx="0" cy="0" r="25.2" fill="url(#kg)"/><line x1="-3.54" y1="-4.21" x2="-20.57" y2="-24.51" stroke="#3e4848" stroke-width="2.6"/></svg><div style="position:absolute;left:1099.76px;top:324.60px;font-size:24px;line-height:24px;color:#f4f4f4;font-weight:400;white-space:nowrap;transform:scaleX(0.9000);transform-origin:0 0;">28%L</div><svg style="position:absolute;left:988.88px;top:400px" width="190" height="780" viewBox="0 400 190 780"><defs><linearGradient id="fb" x1="0" y1="411" x2="0" y2="1151" gradientUnits="userSpaceOnUse"><stop offset="0" stop-color="#505050"/><stop offset="0.3" stop-color="#424242"/><stop offset="1" stop-color="#292929"/></linearGradient><linearGradient id="rb" x1="0" y1="0" x2="0" y2="1"><stop offset="0" stop-color="#8e5454"/><stop offset="1" stop-color="#561c1c"/></linearGradient></defs><path d="M30 411 L112 411 Q117 411 117 416 L117 1060 C117 1082 124 1090 141 1092 A29 29 0 0 1 141 1150 L30 1151 Q25 1151 25 1146 L25 416 Q25 411 30 411 Z" fill="url(#fb)" stroke="#1e1e1e" stroke-width="2.5"/><path d="M26 1153 L141 1153" stroke="#b4c0c0" stroke-width="1.5" opacity="0.8"/><circle cx="141" cy="1121" r="24" fill="url(#rb)" stroke="#9a6a6a" stroke-width="1"/><circle cx="141" cy="1121" r="10" fill="#6a2222" stroke="#d4aaaa" stroke-width="2.5"/><path d="M115 1166.5 L181 1166.5" stroke="#6e7c7c" stroke-width="1"/><path d="M180.5 1082 L180.5 1166" stroke="#6e7c7c" stroke-width="1"/></svg><div style="position:absolute;left:1015.88px;top:413px;width:88px;height:43px;background:#4e4e4e;border-radius:3px 3px 0 0"></div><div style="position:absolute;left:1017.58px;top:425.80px;font-size:22px;line-height:22px;color:#fff;font-weight:400;white-space:nowrap;transform:scaleX(1.0200);transform-origin:0 0;">-8.15dB</div><div style="position:absolute;left:1013.88px;top:456px;width:49px;height:1.5px;background:#2a2a2a"></div><div style="position:absolute;left:1062.88px;top:457px;width:1.5px;height:688px;background:rgba(0,0,0,0.25)"></div><div style="position:absolute;left:1066.88px;top:459px;width:33px;height:55px;background:rgba(0,0,0,0.15)"></div><div style="position:absolute;left:1063.88px;top:516.5px;width:40px;height:1.5px;background:rgba(0,0,0,0.25)"></div><div style="position:absolute;left:1065.88px;top:519px;width:15px;height:626px;background:rgba(0,0,0,0.13)"></div><div style="position:absolute;left:1085.88px;top:519px;width:15px;height:626px;background:rgba(0,0,0,0.13)"></div><div style="position:absolute;left:1080.88px;top:519px;width:5px;height:626px;background:rgba(255,255,255,0.03)"></div><div style="position:absolute;left:1065.88px;top:904px;width:15px;height:241px;background:linear-gradient(to bottom,#ffff3c 0px,#ff3c3c 627px);background-size:15px 627px;background-position:0 -386px"></div><div style="position:absolute;left:1085.88px;top:941px;width:15px;height:204px;background:linear-gradient(to bottom,#ffff3c 0px,#ff3c3c 627px);background-size:15px 627px;background-position:0 -423px"></div><div style="position:absolute;left:1080.88px;top:904px;width:5px;height:241px;background:#1a2222"></div><div style="position:absolute;left:1033.88px;top:494px;width:13px;height:620px;border-radius:5px;background:#3c3c3c;border:1px solid #303030"></div><div style="position:absolute;left:1035.88px;top:495px;width:8px;height:617px;border-radius:4px;background:#1b1b1b;border-right:1.5px solid #5c5c5c;border-bottom:1.5px solid #5c5c5c"></div><div style="position:absolute;left:1020.88px;top:665.5px;width:39px;height:3px;background:#0c0c0c"></div><div style="position:absolute;left:1019.88px;top:724px;width:41px;height:90px;background:rgba(30,30,30,0.35);border-radius:3px"></div><div style="position:absolute;left:1021.88px;top:726px;width:37px;height:86px;border-radius:4px 4px 3px 3px;background:linear-gradient(to right,#d8d8d8 0%,#f6f6f6 12%,#b8b8b8 50%,#f6f6f6 88%,#d0d0d0 100%)"></div><div style="position:absolute;left:1021.88px;top:726px;width:37px;height:12px;border-radius:4px 4px 0 0;background:linear-gradient(#ffffff,#e4e4e4)"></div><div style="position:absolute;left:1021.88px;top:738px;width:37px;height:4px;background:linear-gradient(rgba(0,0,0,.18),rgba(0,0,0,0))"></div><div style="position:absolute;left:1021.88px;top:770px;width:37px;height:30px;background:linear-gradient(to right,#e8e8e8 0%,#ffffff 15%,#e6e6e6 50%,#ffffff 85%,#e0e0e0 100%)"></div><div style="position:absolute;left:1027.88px;top:767px;width:25px;height:3px;background:#3a3a3a"></div><div style="position:absolute;left:1021.88px;top:798px;width:37px;height:14px;border-radius:0 0 3px 3px;background:linear-gradient(to right,#c8c8c8,#e8e8e8 20%,#aaaaaa 50%,#e8e8e8 80%,#c8c8c8)"></div><div style="position:absolute;left:1127.88px;top:410px;width:45px;height:45px;background:#55605f;border-radius:4px;box-shadow:0 1px 1px rgba(255,255,255,.35)"></div><div style="position:absolute;left:1129.88px;top:412px;width:41px;height:39px;background:linear-gradient(#fafafa,#e4e4e4 55%,#cfcfcf);border-radius:2px"></div><div style="position:absolute;left:1139.55px;top:420.40px;font-size:26px;line-height:26px;color:#6a0a0a;font-weight:400;white-space:nowrap;transform:scaleX(1.0000);transform-origin:0 0;-webkit-text-stroke:0.7px #6a0a0a;text-shadow:0 1px 0 #fff">M</div><div style="position:absolute;left:1127.88px;top:469px;width:45px;height:45px;background:#55605f;border-radius:4px;box-shadow:0 1px 1px rgba(255,255,255,.35)"></div><div style="position:absolute;left:1129.88px;top:471px;width:41px;height:39px;background:linear-gradient(#fafafa,#e4e4e4 55%,#cfcfcf);border-radius:2px"></div><div style="position:absolute;left:1141.71px;top:479.40px;font-size:26px;line-height:26px;color:#6b6a1e;font-weight:400;white-space:nowrap;transform:scaleX(1.0000);transform-origin:0 0;-webkit-text-stroke:0.7px #6b6a1e;text-shadow:0 1px 0 #fff">S</div><div style="position:absolute;left:1127.88px;top:538px;width:45px;height:35px;background:#5c6868;border-radius:4px;border-bottom:1px solid #4a5454"></div><div style="position:absolute;left:1129.88px;top:540px;width:41px;height:30px;background:linear-gradient(#c2cccc,#a8b4b4 45%,#9aa8a8);border-radius:2px"></div><svg style="position:absolute;left:1127.88px;top:538px" width="45" height="35" viewBox="0 0 45 35"><path d="M23.5 26 L36 24.5 M16.5 27.5 L23 25.5" stroke="#c8d2d2" stroke-width="1.6"/><path d="M23.2 9 L23.2 26.4 L36 17.7 Z" fill="#7e8c8c" stroke="#586464" stroke-width="1.6" stroke-linejoin="round"/><rect x="33" y="13.5" width="3" height="8" fill="#586464"/></svg><div style="position:absolute;left:991.88px;top:1171px;width:202px;height:3px;background:#3a4444"></div><div style="position:absolute;left:991.88px;top:1174px;width:202px;height:50px;background:linear-gradient(#d8dede,#c6cdcd 30%,#b8c0c0);border-top:2px solid #eef2f2;border-left:2px solid #e8eeee"></div><div style="position:absolute;left:1039.52px;top:1188.60px;font-size:24px;line-height:24px;color:#ff2a2a;font-weight:400;white-space:nowrap;transform:scaleX(0.9300);transform-origin:0 0;">hihat close</div><div style="position:absolute;left:988.88px;top:1224px;width:205px;height:3px;background:#1e1e1e"></div><div style="position:absolute;left:1194.0px;top:115px;width:2.5px;height:1109px;background:#101010"></div><div style="position:absolute;left:1196.5px;top:115px;width:202px;height:150px;background:linear-gradient(#383838 0px,#343434 6px,#303030 7px,#303030 100%);border-left:4px solid #383838"></div><div style="position:absolute;left:1196.5px;top:265px;width:202px;height:4px;background:#121212"></div><div style="position:absolute;left:1204.5px;top:124px;width:64px;height:87px;background:#181818;border-radius:4px;box-shadow:0 2px 1px #3c3c3c"></div><div style="position:absolute;left:1206.5px;top:126px;width:60px;height:36px;background:linear-gradient(#92d2a2,#7cbc8a);border-radius:2px 2px 0 0"></div><div style="position:absolute;left:1206.5px;top:162px;width:60px;height:1.5px;background:#4e8c5c"></div><div style="position:absolute;left:1206.5px;top:163.5px;width:60px;height:2px;background:#9ad4a6"></div><div style="position:absolute;left:1206.5px;top:165.5px;width:60px;height:43px;background:linear-gradient(#70b27e,#66a875);border-radius:0 0 2px 2px"></div><svg style="position:absolute;left:1224.5px;top:133px" width="24" height="24" viewBox="-12 -13 24 24"><path d="M-4.6 -6.6 A9 9 0 1 0 4.6 -6.6" fill="none" stroke="#5fd06a" stroke-width="3" stroke-linecap="round" transform="translate(0,1)"/><path d="M-4.6 -6.6 A9 9 0 1 0 4.6 -6.6" fill="none" stroke="#0c8a1c" stroke-width="3" stroke-linecap="round"/><path d="M0 -10.5 L0 -1" stroke="#0c8a1c" stroke-width="3" stroke-linecap="round"/></svg><div style="position:absolute;left:1216.50px;top:170.90px;font-size:26px;line-height:26px;color:#075418;font-weight:400;white-space:nowrap;transform:scaleX(0.8815);transform-origin:0 0;-webkit-text-stroke:1.1px #075418;text-shadow:0 1.5px 0 #62cc72">F</div><div style="position:absolute;left:1239.50px;top:170.90px;font-size:26px;line-height:26px;color:#075418;font-weight:400;white-space:nowrap;transform:scaleX(1.0380);transform-origin:0 0;-webkit-text-stroke:1.1px #075418;text-shadow:0 1.5px 0 #62cc72">X</div><div style="position:absolute;left:1196.5px;top:269px;width:202px;height:902px;background:linear-gradient(to bottom,#b0bbbb 0%,#a3afaf 40%,#8c9999 100%);border-top:3px solid #d8e0e0;border-left:3px solid #d2dada"></div><div style="position:absolute;left:1395.5px;top:272px;width:3px;height:899px;background:linear-gradient(to right,rgba(0,0,0,0),rgba(0,0,0,0.35))"></div><div style="position:absolute;left:1201.0px;top:291px;width:1px;height:97px;background:#6c7a7a"></div><div style="position:absolute;left:1298.5px;top:291px;width:1px;height:97px;background:#5f6b6b"></div><div style="position:absolute;left:1273.5px;top:316.5px;width:104px;height:42px;background:#748383;border-top:2px solid #4c5858;border-radius:4px;box-shadow:0 3px 0 #d0d8d8"></div><svg style="position:absolute;left:1209.0px;top:298.5px;overflow:visible" width="80" height="80" viewBox="-40 -40 80 80"><defs><linearGradient id="kg" x1="0" y1="0" x2="0" y2="1"><stop offset="0" stop-color="#e6eaea"/><stop offset="1" stop-color="#c4caca"/></linearGradient></defs><path d="M-18 29 A34 34 0 0 0 18 29" fill="none" stroke="#d0d8d8" stroke-width="2.5" opacity="0.7"/><circle cx="-1.5" cy="2" r="31.5" fill="#56666a" opacity="0.6"/><circle cx="-1" cy="1" r="30.5" fill="#617172"/><circle cx="0" cy="1.5" r="27.5" fill="#465252"/><circle cx="0" cy="0" r="25.2" fill="url(#kg)"/><line x1="3.54" y1="-4.21" x2="20.57" y2="-24.51" stroke="#3e4848" stroke-width="2.6"/></svg><div style="position:absolute;left:1298.5px;top:319px;width:1px;height:39px;background:#5a6666"></div><div style="position:absolute;left:1302.58px;top:324.60px;font-size:24px;line-height:24px;color:#f4f4f4;font-weight:400;white-space:nowrap;transform:scaleX(0.9000);transform-origin:0 0;">28%R</div><svg style="position:absolute;left:1193.5px;top:400px" width="190" height="780" viewBox="0 400 190 780"><defs><linearGradient id="fb" x1="0" y1="411" x2="0" y2="1151" gradientUnits="userSpaceOnUse"><stop offset="0" stop-color="#505050"/><stop offset="0.3" stop-color="#424242"/><stop offset="1" stop-color="#292929"/></linearGradient><linearGradient id="rb" x1="0" y1="0" x2="0" y2="1"><stop offset="0" stop-color="#8e5454"/><stop offset="1" stop-color="#561c1c"/></linearGradient></defs><path d="M30 411 L112 411 Q117 411 117 416 L117 1060 C117 1082 124 1090 141 1092 A29 29 0 0 1 141 1150 L30 1151 Q25 1151 25 1146 L25 416 Q25 411 30 411 Z" fill="url(#fb)" stroke="#1e1e1e" stroke-width="2.5"/><path d="M26 1153 L141 1153" stroke="#b4c0c0" stroke-width="1.5" opacity="0.8"/><circle cx="141" cy="1121" r="24" fill="url(#rb)" stroke="#9a6a6a" stroke-width="1"/><circle cx="141" cy="1121" r="10" fill="#6a2222" stroke="#d4aaaa" stroke-width="2.5"/><path d="M115.5 1150 L115.5 1166" stroke="#6e7c7c" stroke-width="1"/><path d="M115 1166.5 L181 1166.5" stroke="#6e7c7c" stroke-width="1"/></svg><div style="position:absolute;left:1220.5px;top:413px;width:88px;height:43px;background:#4e4e4e;border-radius:3px 3px 0 0"></div><div style="position:absolute;left:1222.20px;top:425.80px;font-size:22px;line-height:22px;color:#fff;font-weight:400;white-space:nowrap;transform:scaleX(1.0200);transform-origin:0 0;">-1.70dB</div><div style="position:absolute;left:1218.5px;top:456px;width:49px;height:1.5px;background:#2a2a2a"></div><div style="position:absolute;left:1267.5px;top:457px;width:1.5px;height:688px;background:rgba(0,0,0,0.25)"></div><div style="position:absolute;left:1271.5px;top:459px;width:33px;height:55px;background:rgba(0,0,0,0.15)"></div><div style="position:absolute;left:1268.5px;top:516.5px;width:40px;height:1.5px;background:rgba(0,0,0,0.25)"></div><div style="position:absolute;left:1270.5px;top:519px;width:15px;height:626px;background:rgba(0,0,0,0.13)"></div><div style="position:absolute;left:1290.5px;top:519px;width:15px;height:626px;background:rgba(0,0,0,0.13)"></div><div style="position:absolute;left:1285.5px;top:519px;width:5px;height:626px;background:rgba(255,255,255,0.03)"></div><div style="position:absolute;left:1238.5px;top:494px;width:13px;height:620px;border-radius:5px;background:#3c3c3c;border:1px solid #303030"></div><div style="position:absolute;left:1240.5px;top:495px;width:8px;height:617px;border-radius:4px;background:#1b1b1b;border-right:1.5px solid #5c5c5c;border-bottom:1.5px solid #5c5c5c"></div><div style="position:absolute;left:1225.5px;top:665.5px;width:39px;height:3px;background:#0c0c0c"></div><div style="position:absolute;left:1224.5px;top:648px;width:41px;height:90px;background:rgba(30,30,30,0.35);border-radius:3px"></div><div style="position:absolute;left:1226.5px;top:650px;width:37px;height:86px;border-radius:4px 4px 3px 3px;background:linear-gradient(to right,#d8d8d8 0%,#f6f6f6 12%,#b8b8b8 50%,#f6f6f6 88%,#d0d0d0 100%)"></div><div style="position:absolute;left:1226.5px;top:650px;width:37px;height:12px;border-radius:4px 4px 0 0;background:linear-gradient(#ffffff,#e4e4e4)"></div><div style="position:absolute;left:1226.5px;top:662px;width:37px;height:4px;background:linear-gradient(rgba(0,0,0,.18),rgba(0,0,0,0))"></div><div style="position:absolute;left:1226.5px;top:694px;width:37px;height:30px;background:linear-gradient(to right,#e8e8e8 0%,#ffffff 15%,#e6e6e6 50%,#ffffff 85%,#e0e0e0 100%)"></div><div style="position:absolute;left:1232.5px;top:691px;width:25px;height:3px;background:#3a3a3a"></div><div style="position:absolute;left:1226.5px;top:722px;width:37px;height:14px;border-radius:0 0 3px 3px;background:linear-gradient(to right,#c8c8c8,#e8e8e8 20%,#aaaaaa 50%,#e8e8e8 80%,#c8c8c8)"></div><div style="position:absolute;left:1332.5px;top:410px;width:45px;height:45px;background:#55605f;border-radius:4px;box-shadow:0 1px 1px rgba(255,255,255,.35)"></div><div style="position:absolute;left:1334.5px;top:412px;width:41px;height:39px;background:linear-gradient(#fafafa,#e4e4e4 55%,#cfcfcf);border-radius:2px"></div><div style="position:absolute;left:1344.17px;top:420.40px;font-size:26px;line-height:26px;color:#6a0a0a;font-weight:400;white-space:nowrap;transform:scaleX(1.0000);transform-origin:0 0;-webkit-text-stroke:0.7px #6a0a0a;text-shadow:0 1px 0 #fff">M</div><div style="position:absolute;left:1332.5px;top:469px;width:45px;height:45px;background:#55605f;border-radius:4px;box-shadow:0 1px 1px rgba(255,255,255,.35)"></div><div style="position:absolute;left:1334.5px;top:471px;width:41px;height:39px;background:linear-gradient(#fafafa,#e4e4e4 55%,#cfcfcf);border-radius:2px"></div><div style="position:absolute;left:1346.33px;top:479.40px;font-size:26px;line-height:26px;color:#6b6a1e;font-weight:400;white-space:nowrap;transform:scaleX(1.0000);transform-origin:0 0;-webkit-text-stroke:0.7px #6b6a1e;text-shadow:0 1px 0 #fff">S</div><div style="position:absolute;left:1332.5px;top:538px;width:45px;height:35px;background:#5c6868;border-radius:4px;border-bottom:1px solid #4a5454"></div><div style="position:absolute;left:1334.5px;top:540px;width:41px;height:30px;background:linear-gradient(#c2cccc,#a8b4b4 45%,#9aa8a8);border-radius:2px"></div><svg style="position:absolute;left:1332.5px;top:538px" width="45" height="35" viewBox="0 0 45 35"><path d="M23.5 26 L36 24.5 M16.5 27.5 L23 25.5" stroke="#c8d2d2" stroke-width="1.6"/><path d="M23.2 9 L23.2 26.4 L36 17.7 Z" fill="#7e8c8c" stroke="#586464" stroke-width="1.6" stroke-linejoin="round"/><rect x="33" y="13.5" width="3" height="8" fill="#586464"/></svg><div style="position:absolute;left:1196.5px;top:1171px;width:202px;height:3px;background:#3a4444"></div><div style="position:absolute;left:1196.5px;top:1174px;width:202px;height:50px;background:linear-gradient(#d8dede,#c6cdcd 30%,#b8c0c0);border-top:2px solid #eef2f2;border-left:2px solid #e8eeee"></div><div style="position:absolute;left:1242.90px;top:1186.60px;font-size:24px;line-height:24px;color:#ff2a2a;font-weight:400;white-space:nowrap;transform:scaleX(0.9300);transform-origin:0 0;">hihat Open</div><div style="position:absolute;left:1193.5px;top:1224px;width:205px;height:3px;background:#1e1e1e"></div><div style="position:absolute;left:1398.62px;top:115px;width:2.5px;height:1109px;background:#101010"></div><div style="position:absolute;left:1401.12px;top:115px;width:202px;height:150px;background:linear-gradient(#383838 0px,#343434 6px,#303030 7px,#303030 100%);border-left:4px solid #383838"></div><div style="position:absolute;left:1401.12px;top:265px;width:202px;height:4px;background:#121212"></div><div style="position:absolute;left:1409.12px;top:124px;width:64px;height:87px;background:#181818;border-radius:4px;box-shadow:0 2px 1px #3c3c3c"></div><div style="position:absolute;left:1411.12px;top:126px;width:60px;height:36px;background:linear-gradient(#92d2a2,#7cbc8a);border-radius:2px 2px 0 0"></div><div style="position:absolute;left:1411.12px;top:162px;width:60px;height:1.5px;background:#4e8c5c"></div><div style="position:absolute;left:1411.12px;top:163.5px;width:60px;height:2px;background:#9ad4a6"></div><div style="position:absolute;left:1411.12px;top:165.5px;width:60px;height:43px;background:linear-gradient(#70b27e,#66a875);border-radius:0 0 2px 2px"></div><svg style="position:absolute;left:1429.12px;top:133px" width="24" height="24" viewBox="-12 -13 24 24"><path d="M-4.6 -6.6 A9 9 0 1 0 4.6 -6.6" fill="none" stroke="#5fd06a" stroke-width="3" stroke-linecap="round" transform="translate(0,1)"/><path d="M-4.6 -6.6 A9 9 0 1 0 4.6 -6.6" fill="none" stroke="#0c8a1c" stroke-width="3" stroke-linecap="round"/><path d="M0 -10.5 L0 -1" stroke="#0c8a1c" stroke-width="3" stroke-linecap="round"/></svg><div style="position:absolute;left:1421.12px;top:170.90px;font-size:26px;line-height:26px;color:#075418;font-weight:400;white-space:nowrap;transform:scaleX(0.8815);transform-origin:0 0;-webkit-text-stroke:1.1px #075418;text-shadow:0 1.5px 0 #62cc72">F</div><div style="position:absolute;left:1444.12px;top:170.90px;font-size:26px;line-height:26px;color:#075418;font-weight:400;white-space:nowrap;transform:scaleX(1.0380);transform-origin:0 0;-webkit-text-stroke:1.1px #075418;text-shadow:0 1.5px 0 #62cc72">X</div><div style="position:absolute;left:1401.12px;top:269px;width:202px;height:902px;background:linear-gradient(to bottom,#b0bbbb 0%,#a3afaf 40%,#8c9999 100%);border-top:3px solid #d8e0e0;border-left:3px solid #d2dada"></div><div style="position:absolute;left:1600.12px;top:272px;width:3px;height:899px;background:linear-gradient(to right,rgba(0,0,0,0),rgba(0,0,0,0.35))"></div><div style="position:absolute;left:1478.12px;top:316.5px;width:104px;height:42px;background:#748383;border-top:2px solid #4c5858;border-radius:4px;box-shadow:0 3px 0 #d0d8d8"></div><svg style="position:absolute;left:1413.62px;top:298.5px;overflow:visible" width="80" height="80" viewBox="-40 -40 80 80"><defs><linearGradient id="kg" x1="0" y1="0" x2="0" y2="1"><stop offset="0" stop-color="#e6eaea"/><stop offset="1" stop-color="#c4caca"/></linearGradient></defs><path d="M-18 29 A34 34 0 0 0 18 29" fill="none" stroke="#d0d8d8" stroke-width="2.5" opacity="0.7"/><circle cx="-1.5" cy="2" r="31.5" fill="#56666a" opacity="0.6"/><circle cx="-1" cy="1" r="30.5" fill="#617172"/><circle cx="0" cy="1.5" r="27.5" fill="#465252"/><circle cx="0" cy="0" r="25.2" fill="url(#kg)"/><line x1="3.96" y1="-3.82" x2="23.02" y2="-22.23" stroke="#3e4848" stroke-width="2.6"/></svg><div style="position:absolute;left:1507.20px;top:324.60px;font-size:24px;line-height:24px;color:#f4f4f4;font-weight:400;white-space:nowrap;transform:scaleX(0.9000);transform-origin:0 0;">32%R</div><svg style="position:absolute;left:1398.12px;top:400px" width="190" height="780" viewBox="0 400 190 780"><defs><linearGradient id="fb" x1="0" y1="411" x2="0" y2="1151" gradientUnits="userSpaceOnUse"><stop offset="0" stop-color="#505050"/><stop offset="0.3" stop-color="#424242"/><stop offset="1" stop-color="#292929"/></linearGradient><linearGradient id="rb" x1="0" y1="0" x2="0" y2="1"><stop offset="0" stop-color="#8e5454"/><stop offset="1" stop-color="#561c1c"/></linearGradient></defs><path d="M30 411 L112 411 Q117 411 117 416 L117 1060 C117 1082 124 1090 141 1092 A29 29 0 0 1 141 1150 L30 1151 Q25 1151 25 1146 L25 416 Q25 411 30 411 Z" fill="url(#fb)" stroke="#1e1e1e" stroke-width="2.5"/><path d="M26 1153 L141 1153" stroke="#b4c0c0" stroke-width="1.5" opacity="0.8"/><circle cx="141" cy="1121" r="24" fill="url(#rb)" stroke="#9a6a6a" stroke-width="1"/><circle cx="141" cy="1121" r="10" fill="#6a2222" stroke="#d4aaaa" stroke-width="2.5"/><path d="M115.5 1150 L115.5 1166" stroke="#6e7c7c" stroke-width="1"/><path d="M115 1166.5 L181 1166.5" stroke="#6e7c7c" stroke-width="1"/><path d="M180.5 1082 L180.5 1166" stroke="#6e7c7c" stroke-width="1"/></svg><div style="position:absolute;left:1425.12px;top:413px;width:88px;height:43px;background:#4e4e4e;border-radius:3px 3px 0 0"></div><div style="position:absolute;left:1426.82px;top:425.80px;font-size:22px;line-height:22px;color:#fff;font-weight:400;white-space:nowrap;transform:scaleX(1.0200);transform-origin:0 0;">-8.59dB</div><div style="position:absolute;left:1423.12px;top:456px;width:49px;height:1.5px;background:#2a2a2a"></div><div style="position:absolute;left:1472.12px;top:457px;width:1.5px;height:688px;background:rgba(0,0,0,0.25)"></div><div style="position:absolute;left:1476.12px;top:459px;width:33px;height:55px;background:rgba(0,0,0,0.15)"></div><div style="position:absolute;left:1473.12px;top:516.5px;width:40px;height:1.5px;background:rgba(0,0,0,0.25)"></div><div style="position:absolute;left:1475.12px;top:519px;width:15px;height:626px;background:rgba(0,0,0,0.13)"></div><div style="position:absolute;left:1495.12px;top:519px;width:15px;height:626px;background:rgba(0,0,0,0.13)"></div><div style="position:absolute;left:1490.12px;top:519px;width:5px;height:626px;background:rgba(255,255,255,0.03)"></div><div style="position:absolute;left:1475.12px;top:852px;width:15px;height:293px;background:linear-gradient(to bottom,#ffff3c 0px,#ff3c3c 627px);background-size:15px 627px;background-position:0 -334px"></div><div style="position:absolute;left:1495.12px;top:808px;width:15px;height:337px;background:linear-gradient(to bottom,#ffff3c 0px,#ff3c3c 627px);background-size:15px 627px;background-position:0 -290px"></div><div style="position:absolute;left:1490.12px;top:808px;width:5px;height:337px;background:#1a2222"></div><div style="position:absolute;left:1443.12px;top:494px;width:13px;height:620px;border-radius:5px;background:#3c3c3c;border:1px solid #303030"></div><div style="position:absolute;left:1445.12px;top:495px;width:8px;height:617px;border-radius:4px;background:#1b1b1b;border-right:1.5px solid #5c5c5c;border-bottom:1.5px solid #5c5c5c"></div><div style="position:absolute;left:1430.12px;top:665.5px;width:39px;height:3px;background:#0c0c0c"></div><div style="position:absolute;left:1429.12px;top:730px;width:41px;height:90px;background:rgba(30,30,30,0.35);border-radius:3px"></div><div style="position:absolute;left:1431.12px;top:732px;width:37px;height:86px;border-radius:4px 4px 3px 3px;background:linear-gradient(to right,#d8d8d8 0%,#f6f6f6 12%,#b8b8b8 50%,#f6f6f6 88%,#d0d0d0 100%)"></div><div style="position:absolute;left:1431.12px;top:732px;width:37px;height:12px;border-radius:4px 4px 0 0;background:linear-gradient(#ffffff,#e4e4e4)"></div><div style="position:absolute;left:1431.12px;top:744px;width:37px;height:4px;background:linear-gradient(rgba(0,0,0,.18),rgba(0,0,0,0))"></div><div style="position:absolute;left:1431.12px;top:776px;width:37px;height:30px;background:linear-gradient(to right,#e8e8e8 0%,#ffffff 15%,#e6e6e6 50%,#ffffff 85%,#e0e0e0 100%)"></div><div style="position:absolute;left:1437.12px;top:773px;width:25px;height:3px;background:#3a3a3a"></div><div style="position:absolute;left:1431.12px;top:804px;width:37px;height:14px;border-radius:0 0 3px 3px;background:linear-gradient(to right,#c8c8c8,#e8e8e8 20%,#aaaaaa 50%,#e8e8e8 80%,#c8c8c8)"></div><div style="position:absolute;left:1537.12px;top:410px;width:45px;height:45px;background:#55605f;border-radius:4px;box-shadow:0 1px 1px rgba(255,255,255,.35)"></div><div style="position:absolute;left:1539.12px;top:412px;width:41px;height:39px;background:linear-gradient(#fafafa,#e4e4e4 55%,#cfcfcf);border-radius:2px"></div><div style="position:absolute;left:1548.79px;top:420.40px;font-size:26px;line-height:26px;color:#6a0a0a;font-weight:400;white-space:nowrap;transform:scaleX(1.0000);transform-origin:0 0;-webkit-text-stroke:0.7px #6a0a0a;text-shadow:0 1px 0 #fff">M</div><div style="position:absolute;left:1537.12px;top:469px;width:45px;height:45px;background:#55605f;border-radius:4px;box-shadow:0 1px 1px rgba(255,255,255,.35)"></div><div style="position:absolute;left:1539.12px;top:471px;width:41px;height:39px;background:linear-gradient(#fafafa,#e4e4e4 55%,#cfcfcf);border-radius:2px"></div><div style="position:absolute;left:1550.95px;top:479.40px;font-size:26px;line-height:26px;color:#6b6a1e;font-weight:400;white-space:nowrap;transform:scaleX(1.0000);transform-origin:0 0;-webkit-text-stroke:0.7px #6b6a1e;text-shadow:0 1px 0 #fff">S</div><div style="position:absolute;left:1537.12px;top:538px;width:45px;height:35px;background:#5c6868;border-radius:4px;border-bottom:1px solid #4a5454"></div><div style="position:absolute;left:1539.12px;top:540px;width:41px;height:30px;background:linear-gradient(#c2cccc,#a8b4b4 45%,#9aa8a8);border-radius:2px"></div><svg style="position:absolute;left:1537.12px;top:538px" width="45" height="35" viewBox="0 0 45 35"><path d="M23.5 26 L36 24.5 M16.5 27.5 L23 25.5" stroke="#c8d2d2" stroke-width="1.6"/><path d="M23.2 9 L23.2 26.4 L36 17.7 Z" fill="#7e8c8c" stroke="#586464" stroke-width="1.6" stroke-linejoin="round"/><rect x="33" y="13.5" width="3" height="8" fill="#586464"/></svg><div style="position:absolute;left:1401.12px;top:1171px;width:202px;height:3px;background:#3a4444"></div><div style="position:absolute;left:1401.12px;top:1174px;width:202px;height:50px;background:linear-gradient(#d8dede,#c6cdcd 30%,#b8c0c0);border-top:2px solid #eef2f2;border-left:2px solid #e8eeee"></div><div style="position:absolute;left:1477.31px;top:1188.60px;font-size:24px;line-height:24px;color:#ff2a2a;font-weight:400;white-space:nowrap;transform:scaleX(0.9300);transform-origin:0 0;">Bass</div><div style="position:absolute;left:1398.12px;top:1224px;width:205px;height:3px;background:#1e1e1e"></div><div style="position:absolute;left:1603.25px;top:115px;width:2.5px;height:1109px;background:#101010"></div><div style="position:absolute;left:1605.75px;top:115px;width:202px;height:150px;background:linear-gradient(#383838 0px,#343434 6px,#303030 7px,#303030 100%);border-left:4px solid #383838"></div><div style="position:absolute;left:1605.75px;top:265px;width:202px;height:4px;background:#121212"></div><div style="position:absolute;left:1613.75px;top:124px;width:64px;height:87px;background:#181818;border-radius:4px;box-shadow:0 2px 1px #3c3c3c"></div><div style="position:absolute;left:1615.75px;top:126px;width:60px;height:36px;background:linear-gradient(#92d2a2,#7cbc8a);border-radius:2px 2px 0 0"></div><div style="position:absolute;left:1615.75px;top:162px;width:60px;height:1.5px;background:#4e8c5c"></div><div style="position:absolute;left:1615.75px;top:163.5px;width:60px;height:2px;background:#9ad4a6"></div><div style="position:absolute;left:1615.75px;top:165.5px;width:60px;height:43px;background:linear-gradient(#70b27e,#66a875);border-radius:0 0 2px 2px"></div><svg style="position:absolute;left:1633.75px;top:133px" width="24" height="24" viewBox="-12 -13 24 24"><path d="M-4.6 -6.6 A9 9 0 1 0 4.6 -6.6" fill="none" stroke="#5fd06a" stroke-width="3" stroke-linecap="round" transform="translate(0,1)"/><path d="M-4.6 -6.6 A9 9 0 1 0 4.6 -6.6" fill="none" stroke="#0c8a1c" stroke-width="3" stroke-linecap="round"/><path d="M0 -10.5 L0 -1" stroke="#0c8a1c" stroke-width="3" stroke-linecap="round"/></svg><div style="position:absolute;left:1625.75px;top:170.90px;font-size:26px;line-height:26px;color:#075418;font-weight:400;white-space:nowrap;transform:scaleX(0.8815);transform-origin:0 0;-webkit-text-stroke:1.1px #075418;text-shadow:0 1.5px 0 #62cc72">F</div><div style="position:absolute;left:1648.75px;top:170.90px;font-size:26px;line-height:26px;color:#075418;font-weight:400;white-space:nowrap;transform:scaleX(1.0380);transform-origin:0 0;-webkit-text-stroke:1.1px #075418;text-shadow:0 1.5px 0 #62cc72">X</div><div style="position:absolute;left:1605.75px;top:269px;width:202px;height:902px;background:linear-gradient(to bottom,#b0bbbb 0%,#a3afaf 40%,#8c9999 100%);border-top:3px solid #d8e0e0;border-left:3px solid #d2dada"></div><div style="position:absolute;left:1804.75px;top:272px;width:3px;height:899px;background:linear-gradient(to right,rgba(0,0,0,0),rgba(0,0,0,0.35))"></div><div style="position:absolute;left:1682.75px;top:316.5px;width:104px;height:42px;background:#748383;border-top:2px solid #4c5858;border-radius:4px;box-shadow:0 3px 0 #d0d8d8"></div><svg style="position:absolute;left:1618.25px;top:298.5px;overflow:visible" width="80" height="80" viewBox="-40 -40 80 80"><defs><linearGradient id="kg" x1="0" y1="0" x2="0" y2="1"><stop offset="0" stop-color="#e6eaea"/><stop offset="1" stop-color="#c4caca"/></linearGradient></defs><path d="M-18 29 A34 34 0 0 0 18 29" fill="none" stroke="#d0d8d8" stroke-width="2.5" opacity="0.7"/><circle cx="-1.5" cy="2" r="31.5" fill="#56666a" opacity="0.6"/><circle cx="-1" cy="1" r="30.5" fill="#617172"/><circle cx="0" cy="1.5" r="27.5" fill="#465252"/><circle cx="0" cy="0" r="25.2" fill="url(#kg)"/><line x1="0.96" y1="-5.42" x2="5.56" y2="-31.51" stroke="#3e4848" stroke-width="2.6"/></svg><div style="position:absolute;left:1717.84px;top:324.60px;font-size:24px;line-height:24px;color:#f4f4f4;font-weight:400;white-space:nowrap;transform:scaleX(0.9000);transform-origin:0 0;">7%R</div><svg style="position:absolute;left:1602.75px;top:400px" width="190" height="780" viewBox="0 400 190 780"><defs><linearGradient id="fb" x1="0" y1="411" x2="0" y2="1151" gradientUnits="userSpaceOnUse"><stop offset="0" stop-color="#505050"/><stop offset="0.3" stop-color="#424242"/><stop offset="1" stop-color="#292929"/></linearGradient><linearGradient id="rb" x1="0" y1="0" x2="0" y2="1"><stop offset="0" stop-color="#8e5454"/><stop offset="1" stop-color="#561c1c"/></linearGradient></defs><path d="M30 411 L112 411 Q117 411 117 416 L117 1060 C117 1082 124 1090 141 1092 A29 29 0 0 1 141 1150 L30 1151 Q25 1151 25 1146 L25 416 Q25 411 30 411 Z" fill="url(#fb)" stroke="#1e1e1e" stroke-width="2.5"/><path d="M26 1153 L141 1153" stroke="#b4c0c0" stroke-width="1.5" opacity="0.8"/><circle cx="141" cy="1121" r="24" fill="url(#rb)" stroke="#9a6a6a" stroke-width="1"/><circle cx="141" cy="1121" r="10" fill="#6a2222" stroke="#d4aaaa" stroke-width="2.5"/><path d="M115 1166.5 L181 1166.5" stroke="#6e7c7c" stroke-width="1"/><path d="M180.5 1082 L180.5 1166" stroke="#6e7c7c" stroke-width="1"/></svg><div style="position:absolute;left:1629.75px;top:413px;width:88px;height:43px;background:#4e4e4e;border-radius:3px 3px 0 0"></div><div style="position:absolute;left:1631.45px;top:425.80px;font-size:22px;line-height:22px;color:#fff;font-weight:400;white-space:nowrap;transform:scaleX(1.0200);transform-origin:0 0;">-0.75dB</div><div style="position:absolute;left:1627.75px;top:456px;width:49px;height:1.5px;background:#2a2a2a"></div><div style="position:absolute;left:1676.75px;top:457px;width:1.5px;height:688px;background:rgba(0,0,0,0.25)"></div><div style="position:absolute;left:1680.75px;top:459px;width:33px;height:55px;background:rgba(0,0,0,0.15)"></div><div style="position:absolute;left:1677.75px;top:516.5px;width:40px;height:1.5px;background:rgba(0,0,0,0.25)"></div><div style="position:absolute;left:1679.75px;top:519px;width:15px;height:626px;background:rgba(0,0,0,0.13)"></div><div style="position:absolute;left:1699.75px;top:519px;width:15px;height:626px;background:rgba(0,0,0,0.13)"></div><div style="position:absolute;left:1694.75px;top:519px;width:5px;height:626px;background:rgba(255,255,255,0.03)"></div><div style="position:absolute;left:1679.75px;top:829px;width:15px;height:316px;background:linear-gradient(to bottom,#ffff3c 0px,#ff3c3c 627px);background-size:15px 627px;background-position:0 -311px"></div><div style="position:absolute;left:1699.75px;top:819px;width:15px;height:326px;background:linear-gradient(to bottom,#ffff3c 0px,#ff3c3c 627px);background-size:15px 627px;background-position:0 -301px"></div><div style="position:absolute;left:1694.75px;top:819px;width:5px;height:326px;background:#1a2222"></div><div style="position:absolute;left:1647.75px;top:494px;width:13px;height:620px;border-radius:5px;background:#3c3c3c;border:1px solid #303030"></div><div style="position:absolute;left:1649.75px;top:495px;width:8px;height:617px;border-radius:4px;background:#1b1b1b;border-right:1.5px solid #5c5c5c;border-bottom:1.5px solid #5c5c5c"></div><div style="position:absolute;left:1634.75px;top:665.5px;width:39px;height:3px;background:#0c0c0c"></div><div style="position:absolute;left:1633.75px;top:636px;width:41px;height:90px;background:rgba(30,30,30,0.35);border-radius:3px"></div><div style="position:absolute;left:1635.75px;top:638px;width:37px;height:86px;border-radius:4px 4px 3px 3px;background:linear-gradient(to right,#d8d8d8 0%,#f6f6f6 12%,#b8b8b8 50%,#f6f6f6 88%,#d0d0d0 100%)"></div><div style="position:absolute;left:1635.75px;top:638px;width:37px;height:12px;border-radius:4px 4px 0 0;background:linear-gradient(#ffffff,#e4e4e4)"></div><div style="position:absolute;left:1635.75px;top:650px;width:37px;height:4px;background:linear-gradient(rgba(0,0,0,.18),rgba(0,0,0,0))"></div><div style="position:absolute;left:1635.75px;top:682px;width:37px;height:30px;background:linear-gradient(to right,#e8e8e8 0%,#ffffff 15%,#e6e6e6 50%,#ffffff 85%,#e0e0e0 100%)"></div><div style="position:absolute;left:1641.75px;top:679px;width:25px;height:3px;background:#3a3a3a"></div><div style="position:absolute;left:1635.75px;top:710px;width:37px;height:14px;border-radius:0 0 3px 3px;background:linear-gradient(to right,#c8c8c8,#e8e8e8 20%,#aaaaaa 50%,#e8e8e8 80%,#c8c8c8)"></div><div style="position:absolute;left:1741.75px;top:410px;width:45px;height:45px;background:#55605f;border-radius:4px;box-shadow:0 1px 1px rgba(255,255,255,.35)"></div><div style="position:absolute;left:1743.75px;top:412px;width:41px;height:39px;background:linear-gradient(#fafafa,#e4e4e4 55%,#cfcfcf);border-radius:2px"></div><div style="position:absolute;left:1753.42px;top:420.40px;font-size:26px;line-height:26px;color:#6a0a0a;font-weight:400;white-space:nowrap;transform:scaleX(1.0000);transform-origin:0 0;-webkit-text-stroke:0.7px #6a0a0a;text-shadow:0 1px 0 #fff">M</div><div style="position:absolute;left:1741.75px;top:469px;width:45px;height:45px;background:#55605f;border-radius:4px;box-shadow:0 1px 1px rgba(255,255,255,.35)"></div><div style="position:absolute;left:1743.75px;top:471px;width:41px;height:39px;background:linear-gradient(#fafafa,#e4e4e4 55%,#cfcfcf);border-radius:2px"></div><div style="position:absolute;left:1755.58px;top:479.40px;font-size:26px;line-height:26px;color:#6b6a1e;font-weight:400;white-space:nowrap;transform:scaleX(1.0000);transform-origin:0 0;-webkit-text-stroke:0.7px #6b6a1e;text-shadow:0 1px 0 #fff">S</div><div style="position:absolute;left:1741.75px;top:538px;width:45px;height:35px;background:#5c6868;border-radius:4px;border-bottom:1px solid #4a5454"></div><div style="position:absolute;left:1743.75px;top:540px;width:41px;height:30px;background:linear-gradient(#c2cccc,#a8b4b4 45%,#9aa8a8);border-radius:2px"></div><svg style="position:absolute;left:1741.75px;top:538px" width="45" height="35" viewBox="0 0 45 35"><path d="M23.5 26 L36 24.5 M16.5 27.5 L23 25.5" stroke="#c8d2d2" stroke-width="1.6"/><path d="M23.2 9 L23.2 26.4 L36 17.7 Z" fill="#7e8c8c" stroke="#586464" stroke-width="1.6" stroke-linejoin="round"/><rect x="33" y="13.5" width="3" height="8" fill="#586464"/></svg><div style="position:absolute;left:1605.75px;top:1171px;width:202px;height:3px;background:#3a4444"></div><div style="position:absolute;left:1605.75px;top:1174px;width:202px;height:50px;background:linear-gradient(#d8dede,#c6cdcd 30%,#b8c0c0);border-top:2px solid #eef2f2;border-left:2px solid #e8eeee"></div><div style="position:absolute;left:1686.89px;top:1188.60px;font-size:24px;line-height:24px;color:#ff2a2a;font-weight:400;white-space:nowrap;transform:scaleX(0.9300);transform-origin:0 0;">Pad</div><div style="position:absolute;left:1602.75px;top:1224px;width:205px;height:3px;background:#1e1e1e"></div><div style="position:absolute;left:1807.88px;top:115px;width:2.5px;height:1109px;background:#101010"></div><div style="position:absolute;left:1810.38px;top:115px;width:202px;height:150px;background:linear-gradient(#383838 0px,#343434 6px,#303030 7px,#303030 100%);border-left:4px solid #383838"></div><div style="position:absolute;left:1810.38px;top:265px;width:202px;height:4px;background:#121212"></div><div style="position:absolute;left:1818.38px;top:124px;width:64px;height:87px;background:#181818;border-radius:4px;box-shadow:0 2px 1px #3c3c3c"></div><div style="position:absolute;left:1820.38px;top:126px;width:60px;height:36px;background:linear-gradient(#92d2a2,#7cbc8a);border-radius:2px 2px 0 0"></div><div style="position:absolute;left:1820.38px;top:162px;width:60px;height:1.5px;background:#4e8c5c"></div><div style="position:absolute;left:1820.38px;top:163.5px;width:60px;height:2px;background:#9ad4a6"></div><div style="position:absolute;left:1820.38px;top:165.5px;width:60px;height:43px;background:linear-gradient(#70b27e,#66a875);border-radius:0 0 2px 2px"></div><svg style="position:absolute;left:1838.38px;top:133px" width="24" height="24" viewBox="-12 -13 24 24"><path d="M-4.6 -6.6 A9 9 0 1 0 4.6 -6.6" fill="none" stroke="#5fd06a" stroke-width="3" stroke-linecap="round" transform="translate(0,1)"/><path d="M-4.6 -6.6 A9 9 0 1 0 4.6 -6.6" fill="none" stroke="#0c8a1c" stroke-width="3" stroke-linecap="round"/><path d="M0 -10.5 L0 -1" stroke="#0c8a1c" stroke-width="3" stroke-linecap="round"/></svg><div style="position:absolute;left:1830.38px;top:170.90px;font-size:26px;line-height:26px;color:#075418;font-weight:400;white-space:nowrap;transform:scaleX(0.8815);transform-origin:0 0;-webkit-text-stroke:1.1px #075418;text-shadow:0 1.5px 0 #62cc72">F</div><div style="position:absolute;left:1853.38px;top:170.90px;font-size:26px;line-height:26px;color:#075418;font-weight:400;white-space:nowrap;transform:scaleX(1.0380);transform-origin:0 0;-webkit-text-stroke:1.1px #075418;text-shadow:0 1.5px 0 #62cc72">X</div><div style="position:absolute;left:1810.38px;top:269px;width:202px;height:902px;background:linear-gradient(to bottom,#b0bbbb 0%,#a3afaf 40%,#8c9999 100%);border-top:3px solid #d8e0e0;border-left:3px solid #d2dada"></div><div style="position:absolute;left:2009.38px;top:272px;width:3px;height:899px;background:linear-gradient(to right,rgba(0,0,0,0),rgba(0,0,0,0.35))"></div><div style="position:absolute;left:1814.88px;top:291px;width:1px;height:97px;background:#6c7a7a"></div><div style="position:absolute;left:1912.38px;top:291px;width:1px;height:97px;background:#5f6b6b"></div><div style="position:absolute;left:1887.38px;top:316.5px;width:104px;height:42px;background:#748383;border-top:2px solid #4c5858;border-radius:4px;box-shadow:0 3px 0 #d0d8d8"></div><svg style="position:absolute;left:1822.88px;top:298.5px;overflow:visible" width="80" height="80" viewBox="-40 -40 80 80"><defs><linearGradient id="kg" x1="0" y1="0" x2="0" y2="1"><stop offset="0" stop-color="#e6eaea"/><stop offset="1" stop-color="#c4caca"/></linearGradient></defs><path d="M-18 29 A34 34 0 0 0 18 29" fill="none" stroke="#d0d8d8" stroke-width="2.5" opacity="0.7"/><circle cx="-1.5" cy="2" r="31.5" fill="#56666a" opacity="0.6"/><circle cx="-1" cy="1" r="30.5" fill="#617172"/><circle cx="0" cy="1.5" r="27.5" fill="#465252"/><circle cx="0" cy="0" r="25.2" fill="url(#kg)"/><line x1="1.79" y1="-5.20" x2="10.42" y2="-30.26" stroke="#3e4848" stroke-width="2.6"/></svg><div style="position:absolute;left:1912.38px;top:319px;width:1px;height:39px;background:#5a6666"></div><div style="position:absolute;left:1916.46px;top:324.60px;font-size:24px;line-height:24px;color:#f4f4f4;font-weight:400;white-space:nowrap;transform:scaleX(0.9000);transform-origin:0 0;">13%R</div><svg style="position:absolute;left:1807.38px;top:400px" width="190" height="780" viewBox="0 400 190 780"><defs><linearGradient id="fb" x1="0" y1="411" x2="0" y2="1151" gradientUnits="userSpaceOnUse"><stop offset="0" stop-color="#505050"/><stop offset="0.3" stop-color="#424242"/><stop offset="1" stop-color="#292929"/></linearGradient><linearGradient id="rb" x1="0" y1="0" x2="0" y2="1"><stop offset="0" stop-color="#8e5454"/><stop offset="1" stop-color="#561c1c"/></linearGradient></defs><path d="M30 411 L112 411 Q117 411 117 416 L117 1060 C117 1082 124 1090 141 1092 A29 29 0 0 1 141 1150 L30 1151 Q25 1151 25 1146 L25 416 Q25 411 30 411 Z" fill="url(#fb)" stroke="#1e1e1e" stroke-width="2.5"/><path d="M26 1153 L141 1153" stroke="#b4c0c0" stroke-width="1.5" opacity="0.8"/><circle cx="141" cy="1121" r="24" fill="url(#rb)" stroke="#9a6a6a" stroke-width="1"/><circle cx="141" cy="1121" r="10" fill="#6a2222" stroke="#d4aaaa" stroke-width="2.5"/><path d="M115 1166.5 L181 1166.5" stroke="#6e7c7c" stroke-width="1"/></svg><div style="position:absolute;left:1834.38px;top:413px;width:88px;height:43px;background:#4e4e4e;border-radius:3px 3px 0 0"></div><div style="position:absolute;left:1839.82px;top:425.80px;font-size:22px;line-height:22px;color:#fff;font-weight:400;white-space:nowrap;transform:scaleX(1.0200);transform-origin:0 0;">0.00dB</div><div style="position:absolute;left:1832.38px;top:456px;width:49px;height:1.5px;background:#2a2a2a"></div><div style="position:absolute;left:1881.38px;top:457px;width:1.5px;height:688px;background:rgba(0,0,0,0.25)"></div><div style="position:absolute;left:1885.38px;top:459px;width:33px;height:55px;background:rgba(0,0,0,0.15)"></div><div style="position:absolute;left:1882.38px;top:516.5px;width:40px;height:1.5px;background:rgba(0,0,0,0.25)"></div><div style="position:absolute;left:1884.38px;top:519px;width:15px;height:626px;background:rgba(0,0,0,0.13)"></div><div style="position:absolute;left:1904.38px;top:519px;width:15px;height:626px;background:rgba(0,0,0,0.13)"></div><div style="position:absolute;left:1899.38px;top:519px;width:5px;height:626px;background:rgba(255,255,255,0.03)"></div><div style="position:absolute;left:1884.38px;top:945px;width:15px;height:200px;background:linear-gradient(to bottom,#ffff3c 0px,#ff3c3c 627px);background-size:15px 627px;background-position:0 -427px"></div><div style="position:absolute;left:1904.38px;top:904px;width:15px;height:241px;background:linear-gradient(to bottom,#ffff3c 0px,#ff3c3c 627px);background-size:15px 627px;background-position:0 -386px"></div><div style="position:absolute;left:1899.38px;top:904px;width:5px;height:241px;background:#1a2222"></div><div style="position:absolute;left:1852.38px;top:494px;width:13px;height:620px;border-radius:5px;background:#3c3c3c;border:1px solid #303030"></div><div style="position:absolute;left:1854.38px;top:495px;width:8px;height:617px;border-radius:4px;background:#1b1b1b;border-right:1.5px solid #5c5c5c;border-bottom:1.5px solid #5c5c5c"></div><div style="position:absolute;left:1839.38px;top:665.5px;width:39px;height:3px;background:#0c0c0c"></div><div style="position:absolute;left:1838.38px;top:626px;width:41px;height:90px;background:rgba(30,30,30,0.35);border-radius:3px"></div><div style="position:absolute;left:1840.38px;top:628px;width:37px;height:86px;border-radius:4px 4px 3px 3px;background:linear-gradient(to right,#d8d8d8 0%,#f6f6f6 12%,#b8b8b8 50%,#f6f6f6 88%,#d0d0d0 100%)"></div><div style="position:absolute;left:1840.38px;top:628px;width:37px;height:12px;border-radius:4px 4px 0 0;background:linear-gradient(#ffffff,#e4e4e4)"></div><div style="position:absolute;left:1840.38px;top:640px;width:37px;height:4px;background:linear-gradient(rgba(0,0,0,.18),rgba(0,0,0,0))"></div><div style="position:absolute;left:1840.38px;top:672px;width:37px;height:30px;background:linear-gradient(to right,#e8e8e8 0%,#ffffff 15%,#e6e6e6 50%,#ffffff 85%,#e0e0e0 100%)"></div><div style="position:absolute;left:1846.38px;top:669px;width:25px;height:3px;background:#3a3a3a"></div><div style="position:absolute;left:1840.38px;top:700px;width:37px;height:14px;border-radius:0 0 3px 3px;background:linear-gradient(to right,#c8c8c8,#e8e8e8 20%,#aaaaaa 50%,#e8e8e8 80%,#c8c8c8)"></div><div style="position:absolute;left:1946.38px;top:410px;width:45px;height:45px;background:#55605f;border-radius:4px;box-shadow:0 1px 1px rgba(255,255,255,.35)"></div><div style="position:absolute;left:1948.38px;top:412px;width:41px;height:39px;background:linear-gradient(#fafafa,#e4e4e4 55%,#cfcfcf);border-radius:2px"></div><div style="position:absolute;left:1958.05px;top:420.40px;font-size:26px;line-height:26px;color:#6a0a0a;font-weight:400;white-space:nowrap;transform:scaleX(1.0000);transform-origin:0 0;-webkit-text-stroke:0.7px #6a0a0a;text-shadow:0 1px 0 #fff">M</div><div style="position:absolute;left:1946.38px;top:469px;width:45px;height:45px;background:#55605f;border-radius:4px;box-shadow:0 1px 1px rgba(255,255,255,.35)"></div><div style="position:absolute;left:1948.38px;top:471px;width:41px;height:39px;background:linear-gradient(#fafafa,#e4e4e4 55%,#cfcfcf);border-radius:2px"></div><div style="position:absolute;left:1960.21px;top:479.40px;font-size:26px;line-height:26px;color:#6b6a1e;font-weight:400;white-space:nowrap;transform:scaleX(1.0000);transform-origin:0 0;-webkit-text-stroke:0.7px #6b6a1e;text-shadow:0 1px 0 #fff">S</div><div style="position:absolute;left:1946.38px;top:538px;width:45px;height:35px;background:#5c6868;border-radius:4px;border-bottom:1px solid #4a5454"></div><div style="position:absolute;left:1948.38px;top:540px;width:41px;height:30px;background:linear-gradient(#c2cccc,#a8b4b4 45%,#9aa8a8);border-radius:2px"></div><svg style="position:absolute;left:1946.38px;top:538px" width="45" height="35" viewBox="0 0 45 35"><path d="M23.5 26 L36 24.5 M16.5 27.5 L23 25.5" stroke="#c8d2d2" stroke-width="1.6"/><path d="M23.2 9 L23.2 26.4 L36 17.7 Z" fill="#7e8c8c" stroke="#586464" stroke-width="1.6" stroke-linejoin="round"/><rect x="33" y="13.5" width="3" height="8" fill="#586464"/></svg><div style="position:absolute;left:1810.38px;top:1171px;width:202px;height:3px;background:#3a4444"></div><div style="position:absolute;left:1810.38px;top:1174px;width:202px;height:50px;background:linear-gradient(#d8dede,#c6cdcd 30%,#b8c0c0);border-top:2px solid #eef2f2;border-left:2px solid #e8eeee"></div><div style="position:absolute;left:1882.85px;top:1188.60px;font-size:24px;line-height:24px;color:#ff2a2a;font-weight:400;white-space:nowrap;transform:scaleX(0.9300);transform-origin:0 0;">Noise</div><div style="position:absolute;left:1807.38px;top:1224px;width:205px;height:3px;background:#1e1e1e"></div><div style="position:absolute;left:2012px;top:115px;width:3px;height:1112px;background:#0e0e0e"></div><div style="position:absolute;left:37px;top:1227px;width:1409px;height:121px;background:linear-gradient(#4a4a4a 0%,#444 30%,#353535 80%,#333 100%);border-top:1px solid #2a2a2a;border-bottom:2px solid #3e3e3e"></div><div style="position:absolute;left:50px;top:1242px;width:391px;height:86px;border-radius:36px/43px;background:#101010;box-shadow:0 3px 4px rgba(0,0,0,.45)"></div><div style="position:absolute;left:52px;top:1244px;width:387px;height:82px;border-radius:34px/41px;overflow:hidden;background:linear-gradient(#626262 0%,#4c4c4c 48%,#2e2e2e 52%,#333 85%,#3a3a3a 100%)"><div style="position:absolute;left:153px;top:0px;width:80px;height:82px;background:linear-gradient(#3f8046 0%,#2c6634 45%,#1f4f26 55%,#2a5c31 100%)"></div><div style="position:absolute;left:74px;top:0px;width:1px;height:82px;background:#2a2a2a"></div><div style="position:absolute;left:233px;top:0px;width:1px;height:82px;background:#2a2a2a"></div><div style="position:absolute;left:313px;top:0px;width:1px;height:82px;background:#2a2a2a"></div></div><svg style="position:absolute;left:50px;top:1242px" width="391" height="86" viewBox="50 1242 391 86"><defs><linearGradient id="ig" x1="0" y1="0" x2="0" y2="1"><stop offset="0" stop-color="#d8d8d8"/><stop offset="1" stop-color="#a4a4a4"/></linearGradient><linearGradient id="pg" x1="0" y1="0" x2="1" y2="1"><stop offset="0" stop-color="#8af07a"/><stop offset="1" stop-color="#20c0a0"/></linearGradient></defs><rect x="75" y="1272" width="9" height="27" fill="url(#ig)" stroke="#1c1c1c" stroke-width="1.6"/><path d="M110 1272 L110 1299 L84 1285.5 Z" fill="url(#ig)" stroke="#1c1c1c" stroke-width="1.6"/><rect x="151.5" y="1272" width="27" height="27" fill="url(#ig)" stroke="#1c1c1c" stroke-width="1.6"/><path d="M230 1273 L262.5 1285.5 L230 1298 Z" fill="url(#pg)" stroke="#1a3a1a" stroke-width="0.8"/><rect x="309" y="1272" width="10" height="27" fill="url(#ig)" stroke="#1c1c1c" stroke-width="1.6"/><rect x="329" y="1272" width="10" height="27" fill="url(#ig)" stroke="#1c1c1c" stroke-width="1.6"/><path d="M381 1272 L381 1299 L406 1285.5 Z" fill="url(#ig)" stroke="#1c1c1c" stroke-width="1.6"/><rect x="406" y="1272" width="9.5" height="27" fill="url(#ig)" stroke="#1c1c1c" stroke-width="1.6"/></svg><svg style="position:absolute;left:440px;top:1235px" width="200" height="100" viewBox="440 1235 200 100"><defs><linearGradient id="rg" x1="0" y1="0" x2="0" y2="1"><stop offset="0" stop-color="#a06a6a"/><stop offset="0.2" stop-color="#8a5252"/><stop offset="0.45" stop-color="#5e3434"/><stop offset="0.55" stop-color="#442222"/><stop offset="1" stop-color="#472428"/></linearGradient><linearGradient id="lg" x1="0" y1="0" x2="0" y2="1"><stop offset="0" stop-color="#626262"/><stop offset="0.45" stop-color="#4a4a4a"/><stop offset="0.55" stop-color="#2c2c2c"/><stop offset="1" stop-color="#363636"/></linearGradient></defs><ellipse cx="490" cy="1284.5" rx="40.5" ry="42.5" fill="#121212"/><ellipse cx="490" cy="1285" rx="38.2" ry="39.8" fill="url(#rg)" stroke="#9a6a6c" stroke-width="1.5"/><circle cx="490" cy="1285" r="12.3" fill="#3c1c1e" stroke="#b89a9c" stroke-width="5.8"/><ellipse cx="581" cy="1284.5" rx="40.6" ry="43" fill="#101010"/><ellipse cx="581" cy="1285" rx="38.3" ry="40.3" fill="url(#lg)" stroke="#505050" stroke-width="1"/><path d="M572.4 1276 A14 14 0 0 0 578 1299.5" fill="none" stroke="#b8b8b8" stroke-width="3.6"/><path d="M584 1270.6 A14 14 0 0 1 590.5 1292" fill="none" stroke="#b0b0b0" stroke-width="3.6"/><path d="M567.8 1267.6 L578 1270.4 L572.4 1282 Z" fill="#d0d0d0"/><path d="M583.5 1300.3 L594.6 1302.7 L590.4 1290.5 Z" fill="#9a9a9a"/></svg><div style="position:absolute;left:630px;top:1240px;width:813px;height:91px;background:linear-gradient(#4e4e4e,#3e3e3e 45%,#303030 100%);border:2px solid #1e1e1e;border-radius:6px;box-shadow:0 2px 0 #5a5a5a"></div><div style="position:absolute;left:713.00px;top:1267.70px;font-size:38px;line-height:38px;color:#fff;font-weight:400;white-space:nowrap;transform:scaleX(0.9814);transform-origin:0 0;">4.4.67 318850</div><div style="position:absolute;left:1169.70px;top:1267.70px;font-size:38px;line-height:38px;color:#fff;font-weight:400;white-space:nowrap;transform:scaleX(0.9620);transform-origin:0 0;">0:07.230</div><div style="position:absolute;left:1451px;top:1228px;width:277px;height:120px;background:#202020;border:2px solid #6a6a6a;border-radius:10px"></div><div style="position:absolute;left:1554.00px;top:1274.60px;font-size:24px;line-height:24px;color:#fff;font-weight:400;white-space:nowrap;transform:scaleX(0.9153);transform-origin:0 0;">&lt; Bank</div><div style="position:absolute;left:1733px;top:1228px;width:277px;height:120px;background:#202020;border:2px solid #6a6a6a;border-radius:10px"></div><div style="position:absolute;left:1837.00px;top:1274.60px;font-size:24px;line-height:24px;color:#fff;font-weight:400;white-space:nowrap;transform:scaleX(0.9020);transform-origin:0 0;">Bank &gt;</div><svg style="position:absolute;left:60px;top:1370px" width="180" height="50" viewBox="60 1370 180 50"><path d="M99 1382.5 L99 1407.5 L77 1395 Z" fill="#a6a6a6" stroke="#a6a6a6" stroke-width="2" stroke-linejoin="round"/><circle cx="217.5" cy="1395" r="11.3" fill="#a6a6a6"/></svg><div style="position:absolute;left:1946px;top:1383px;width:24px;height:24px;background:#a6a6a6;border-radius:2px"></div>
</div></body></html>
